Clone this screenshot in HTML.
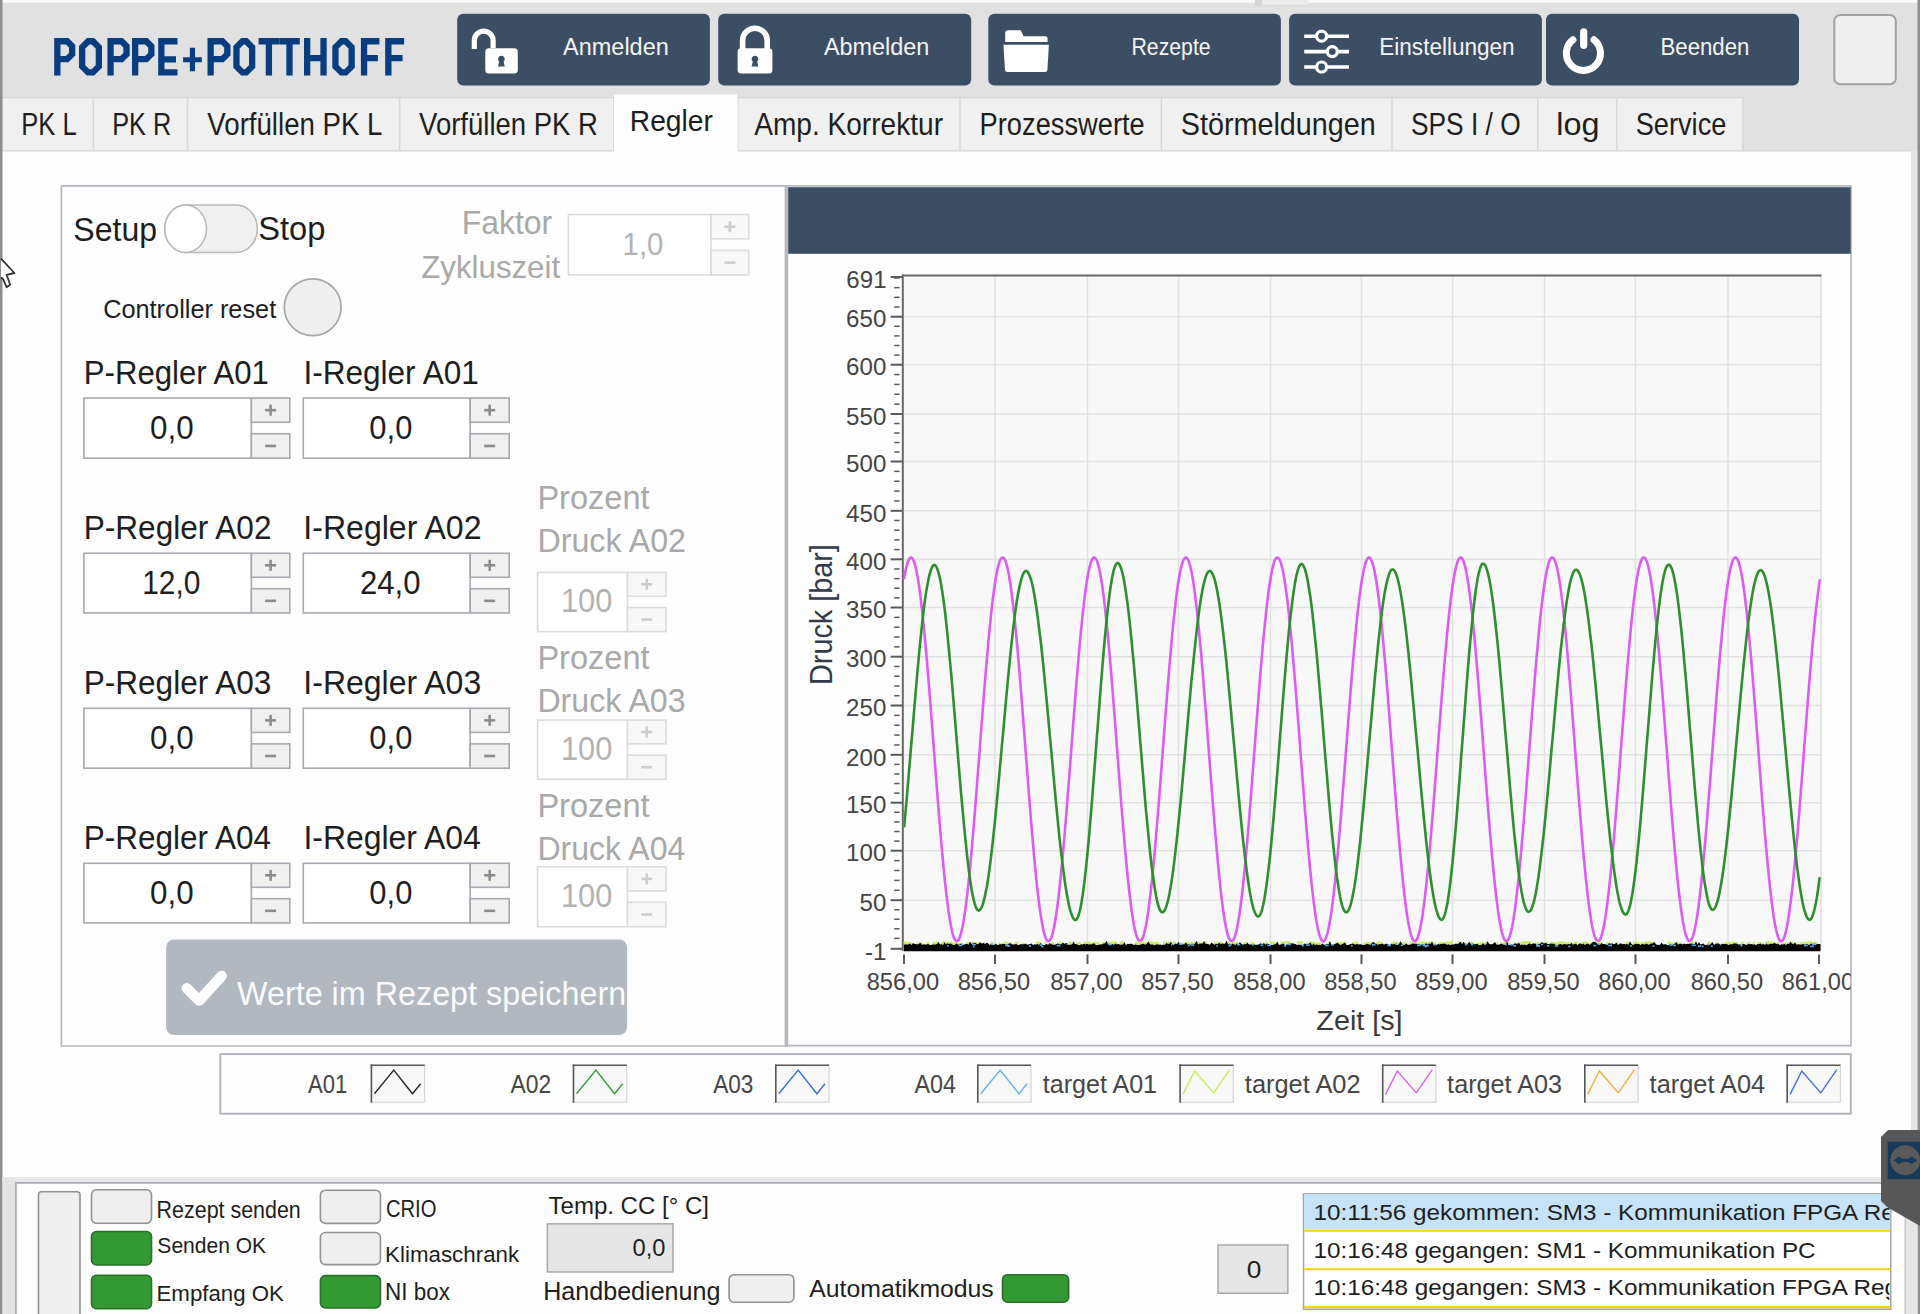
<!DOCTYPE html>
<html><head><meta charset="utf-8"><title>Regler</title>
<style>html,body{margin:0;padding:0;background:#fdfdfd;overflow:hidden;width:1920px;height:1314px}svg{display:block}text{font-family:"Liberation Sans",sans-serif}</style>
</head><body>
<svg width="1920" height="1314" viewBox="0 0 1920 1314">
<rect x="0.00" y="0.00" width="1920.00" height="1314.00" fill="#fdfdfd" />
<rect x="0.00" y="2.50" width="1920.00" height="148.50" fill="#e1e1e1" />
<rect x="0.00" y="0.00" width="1920.00" height="2.50" fill="#fbfbfb" />
<path d="M57.35,75.6 V41.25 H67.15 L72.15,46.25 V54.20 L67.15,59.2 H57.35" fill="none" stroke="#083d80" stroke-width="6.3" stroke-linejoin="miter" stroke-linecap="butt"/>
<path d="M88.15,41.25 H92.85 L98.85,47.25 V66.45 L92.85,72.45 H88.15 L82.15,66.45 V47.25 Z" fill="none" stroke="#083d80" stroke-width="6.3" stroke-linejoin="miter" stroke-linecap="butt"/>
<path d="M110.55,75.6 V41.25 H121.55 L126.55,46.25 V54.20 L121.55,59.2 H110.55" fill="none" stroke="#083d80" stroke-width="6.3" stroke-linejoin="miter" stroke-linecap="butt"/>
<path d="M135.15,75.6 V41.25 H146.35 L151.35,46.25 V54.20 L146.35,59.2 H135.15" fill="none" stroke="#083d80" stroke-width="6.3" stroke-linejoin="miter" stroke-linecap="butt"/>
<path d="M177.50,41.25 H161.35 V72.45 H177.50 M161.35,59.3 H176.00" fill="none" stroke="#083d80" stroke-width="6.3" stroke-linejoin="miter" stroke-linecap="butt"/>
<path d="M192.45,47.8 V71.2 M183.1,59.75 H201.8" stroke="#083d80" stroke-width="5.2" fill="none"/>
<path d="M210.65,75.6 V41.25 H222.35 L227.35,46.25 V54.20 L222.35,59.2 H210.65" fill="none" stroke="#083d80" stroke-width="6.3" stroke-linejoin="miter" stroke-linecap="butt"/>
<path d="M242.45,41.25 H246.15 L252.15,47.25 V66.45 L246.15,72.45 H242.45 L236.45,66.45 V47.25 Z" fill="none" stroke="#083d80" stroke-width="6.3" stroke-linejoin="miter" stroke-linecap="butt"/>
<path d="M258.60,41.25 H279.20 M268.90,41.25 V75.6" fill="none" stroke="#083d80" stroke-width="6.3" stroke-linejoin="miter" stroke-linecap="butt"/>
<path d="M279.20,41.25 H299.80 M289.50,41.25 V75.6" fill="none" stroke="#083d80" stroke-width="6.3" stroke-linejoin="miter" stroke-linecap="butt"/>
<path d="M307.15,38.1 V75.6 M323.55,38.1 V75.6 M307.15,58.1 H323.55" fill="none" stroke="#083d80" stroke-width="6.3" stroke-linejoin="miter" stroke-linecap="butt"/>
<path d="M341.45,41.25 H345.65 L351.65,47.25 V66.45 L345.65,72.45 H341.45 L335.45,66.45 V47.25 Z" fill="none" stroke="#083d80" stroke-width="6.3" stroke-linejoin="miter" stroke-linecap="butt"/>
<path d="M379.40,41.25 H364.05 V75.6 M364.05,58.1 H377.90" fill="none" stroke="#083d80" stroke-width="6.3" stroke-linejoin="miter" stroke-linecap="butt"/>
<path d="M404.10,41.25 H388.35 V75.6 M388.35,58.1 H402.60" fill="none" stroke="#083d80" stroke-width="6.3" stroke-linejoin="miter" stroke-linecap="butt"/>
<rect x="457.20" y="13.80" width="252.70" height="71.70" fill="#3c4e63" rx="6" />
<g><text transform="translate(563.10,55.10) scale(0.9640,1)" font-size="24.35" font-weight="normal" fill="#f4f4f4" >Anmelden</text></g>
<rect x="718.20" y="13.80" width="253.00" height="71.70" fill="#3c4e63" rx="6" />
<g><text transform="translate(823.90,55.10) scale(0.9622,1)" font-size="24.35" font-weight="normal" fill="#f4f4f4" >Abmelden</text></g>
<rect x="988.30" y="13.80" width="292.60" height="71.70" fill="#3c4e63" rx="6" />
<g><text transform="translate(1131.50,55.10) scale(0.8728,1)" font-size="24.35" font-weight="normal" fill="#f4f4f4" >Rezepte</text></g>
<rect x="1289.10" y="13.80" width="252.80" height="71.70" fill="#3c4e63" rx="6" />
<g><text transform="translate(1379.30,55.10) scale(0.9259,1)" font-size="24.35" font-weight="normal" fill="#f4f4f4" >Einstellungen</text></g>
<rect x="1546.00" y="13.80" width="253.00" height="71.70" fill="#3c4e63" rx="6" />
<g><text transform="translate(1660.52,55.10) scale(0.9119,1)" font-size="24.35" font-weight="normal" fill="#f4f4f4" >Beenden</text></g>
<path d="M474.3,49 L474.3,40.5 A9.4,9.4 0 0 1 493.1,40.5 L493.1,48" fill="none" stroke="#ffffff" stroke-width="5.2"/>
<rect x="485.30" y="48.20" width="32.50" height="25.40" fill="#ffffff" rx="3.5" />
<path d="M501.4,55.8 a3.3,3.3 0 0 1 2.2,5.8 l1.2,5 h-6.8 l1.2,-5 a3.3,3.3 0 0 1 2.2,-5.8z" fill="#3c4e63"/>
<path d="M742.6,50 L742.6,40.5 A12.3,12.3 0 0 1 767.2,40.5 L767.2,50" fill="none" stroke="#ffffff" stroke-width="5.6"/>
<rect x="737.60" y="48.20" width="34.80" height="25.40" fill="#ffffff" rx="3.5" />
<path d="M755,55.8 a3.3,3.3 0 0 1 2.2,5.8 l1.2,5 h-6.8 l1.2,-5 a3.3,3.3 0 0 1 2.2,-5.8z" fill="#3c4e63"/>
<path d="M1005.2,33 Q1005.2,30.3 1008,30.3 L1020.8,30.3 L1023.6,36.2 L1045,36.2 Q1047.6,36.2 1047.6,39 L1047.6,42 L1005.2,42 Z" fill="#ffffff"/>
<path d="M1003.4,44.7 L1048.9,44.7 L1047.4,70 Q1047.2,72.1 1045,72.1 L1007.4,72.1 Q1005.2,72.1 1005,70 Z" fill="#ffffff"/>
<line x1="1304.20" y1="36.20" x2="1349.00" y2="36.20" stroke="#ffffff" stroke-width="3.6" />
<circle cx="1321.6" cy="36.2" r="5.0" fill="#3c4e63" stroke="#ffffff" stroke-width="3.2"/>
<line x1="1304.20" y1="51.60" x2="1349.00" y2="51.60" stroke="#ffffff" stroke-width="3.6" />
<circle cx="1332.3" cy="51.6" r="5.0" fill="#3c4e63" stroke="#ffffff" stroke-width="3.2"/>
<line x1="1304.20" y1="67.00" x2="1349.00" y2="67.00" stroke="#ffffff" stroke-width="3.6" />
<circle cx="1321.6" cy="67.0" r="5.0" fill="#3c4e63" stroke="#ffffff" stroke-width="3.2"/>
<path d="M1572.9,39.8 A17.1,17.1 0 1 0 1593.9,39.8" fill="none" stroke="#ffffff" stroke-width="7" stroke-linecap="round"/>
<line x1="1583.70" y1="31.80" x2="1583.70" y2="45.30" stroke="#ffffff" stroke-width="7.2" stroke-linecap="round"/>
<rect x="1834.30" y="15.00" width="61.50" height="69.20" fill="#efefef" stroke="#a2a2a2" stroke-width="2" rx="6" />
<rect x="1255.00" y="0.00" width="53.00" height="6.00" fill="#d7d7d7" />
<rect x="1262.00" y="0.00" width="46.00" height="5.00" fill="#ececec" />
<rect x="2.50" y="98.00" width="90.80" height="52.50" fill="#f0f0f0" />
<rect x="93.30" y="98.00" width="94.20" height="52.50" fill="#f0f0f0" />
<rect x="187.50" y="98.00" width="212.20" height="52.50" fill="#f0f0f0" />
<rect x="399.70" y="98.00" width="213.80" height="52.50" fill="#f0f0f0" />
<rect x="738.00" y="98.00" width="222.00" height="52.50" fill="#f0f0f0" />
<rect x="960.00" y="98.00" width="201.40" height="52.50" fill="#f0f0f0" />
<rect x="1161.40" y="98.00" width="230.60" height="52.50" fill="#f0f0f0" />
<rect x="1392.00" y="98.00" width="145.80" height="52.50" fill="#f0f0f0" />
<rect x="1537.80" y="98.00" width="78.90" height="52.50" fill="#f0f0f0" />
<rect x="1616.70" y="98.00" width="126.10" height="52.50" fill="#f0f0f0" />
<g><text transform="translate(21.26,134.70) scale(0.8237,1)" font-size="31.01" font-weight="normal" fill="#1e1e1e" >PK L</text></g>
<line x1="93.30" y1="98.00" x2="93.30" y2="150.50" stroke="#d9d9d9" stroke-width="1.5" />
<g><text transform="translate(112.18,134.70) scale(0.8159,1)" font-size="31.01" font-weight="normal" fill="#1e1e1e" >PK R</text></g>
<line x1="187.50" y1="98.00" x2="187.50" y2="150.50" stroke="#d9d9d9" stroke-width="1.5" />
<g><text transform="translate(207.36,134.70) scale(0.8915,1)" font-size="31.01" font-weight="normal" fill="#1e1e1e" >Vorfüllen PK L</text></g>
<line x1="399.70" y1="98.00" x2="399.70" y2="150.50" stroke="#d9d9d9" stroke-width="1.5" />
<g><text transform="translate(419.06,134.70) scale(0.8873,1)" font-size="31.01" font-weight="normal" fill="#1e1e1e" >Vorfüllen PK R</text></g>
<g><text transform="translate(754.20,134.70) scale(0.9055,1)" font-size="31.01" font-weight="normal" fill="#1e1e1e" >Amp. Korrektur</text></g>
<line x1="960.00" y1="98.00" x2="960.00" y2="150.50" stroke="#d9d9d9" stroke-width="1.5" />
<g><text transform="translate(979.62,134.70) scale(0.8792,1)" font-size="31.01" font-weight="normal" fill="#1e1e1e" >Prozesswerte</text></g>
<line x1="1161.40" y1="98.00" x2="1161.40" y2="150.50" stroke="#d9d9d9" stroke-width="1.5" />
<g><text transform="translate(1180.70,134.70) scale(0.9281,1)" font-size="31.01" font-weight="normal" fill="#1e1e1e" >Störmeldungen</text></g>
<line x1="1392.00" y1="98.00" x2="1392.00" y2="150.50" stroke="#d9d9d9" stroke-width="1.5" />
<g><text transform="translate(1410.92,134.70) scale(0.8490,1)" font-size="31.01" font-weight="normal" fill="#1e1e1e" >SPS I / O</text></g>
<line x1="1537.80" y1="98.00" x2="1537.80" y2="150.50" stroke="#d9d9d9" stroke-width="1.5" />
<g><text transform="translate(1556.30,134.70) scale(1.0435,1)" font-size="31.01" font-weight="normal" fill="#1e1e1e" >log</text></g>
<line x1="1616.70" y1="98.00" x2="1616.70" y2="150.50" stroke="#d9d9d9" stroke-width="1.5" />
<g><text transform="translate(1635.68,134.70) scale(0.8774,1)" font-size="31.01" font-weight="normal" fill="#1e1e1e" >Service</text></g>
<line x1="1742.80" y1="98.00" x2="1742.80" y2="150.50" stroke="#d9d9d9" stroke-width="1.5" />
<line x1="2.50" y1="97.80" x2="1742.80" y2="97.80" stroke="#d6d6d6" stroke-width="1" />
<rect x="2.50" y="150.50" width="1908.50" height="1026.50" fill="#fdfdfd" />
<line x1="2.50" y1="150.80" x2="613.50" y2="150.80" stroke="#d4d4d4" stroke-width="1.2" />
<line x1="738.00" y1="150.80" x2="1911.00" y2="150.80" stroke="#d4d4d4" stroke-width="1.2" />
<rect x="613.50" y="94.50" width="124.50" height="57.00" fill="#fdfdfd" />
<line x1="613.50" y1="94.50" x2="613.50" y2="151.00" stroke="#dadada" stroke-width="1" />
<line x1="738.00" y1="94.50" x2="738.00" y2="151.00" stroke="#dadada" stroke-width="1" />
<g><text transform="translate(629.74,130.60) scale(0.9461,1)" font-size="29.86" font-weight="normal" fill="#1e1e1e" >Regler</text></g>
<rect x="1911.00" y="150.50" width="6.50" height="1163.50" fill="#e6e6e6" />
<rect x="0.00" y="0.00" width="2.50" height="1314.00" fill="#8e8e8e" />
<rect x="1917.50" y="0.00" width="2.50" height="1314.00" fill="#8e8e8e" />
<line x1="61.40" y1="185.90" x2="1851.50" y2="185.90" stroke="#b3b6bc" stroke-width="1.6" />
<line x1="61.40" y1="185.90" x2="61.40" y2="1046.60" stroke="#b3b6bc" stroke-width="1.6" />
<line x1="61.40" y1="1046.00" x2="786.00" y2="1046.00" stroke="#b3b6bc" stroke-width="1.6" />
<rect x="784.60" y="185.50" width="3.60" height="861.10" fill="#b6b9bf" />
<g><text transform="translate(73.26,240.60) scale(0.9582,1)" font-size="33.48" font-weight="normal" fill="#1e1e1e" >Setup</text></g>
<g><text transform="translate(258.13,240.20) scale(0.9893,1)" font-size="33.04" font-weight="normal" fill="#1e1e1e" >Stop</text></g>
<path d="M185.65,205.05 H236.45 A20.85,23.75 0 0 1 236.45,252.55 H185.65 A20.85,23.75 0 0 1 185.65,205.05 Z" fill="#f0f0f0" stroke="#b8b8b8" stroke-width="1.5"/>
<ellipse cx="185.65" cy="228.8" rx="20.85" ry="23.75" fill="#ffffff" stroke="#b8b8b8" stroke-width="1.5"/>
<g><text transform="translate(103.13,317.70) scale(1.0106,1)" font-size="25.07" font-weight="normal" fill="#1e1e1e" >Controller reset</text></g>
<circle cx="312.7" cy="307.3" r="28.4" fill="#efefef" stroke="#a9a9a9" stroke-width="1.8"/>
<g><text transform="translate(461.85,234.40) scale(0.9777,1)" font-size="32.61" font-weight="normal" fill="#a9a9a9" >Faktor</text></g>
<g><text transform="translate(421.26,277.50) scale(1.0028,1)" font-size="31.16" font-weight="normal" fill="#a9a9a9" >Zykluszeit</text></g>
<rect x="568.40" y="214.60" width="142.60" height="60.30" fill="#ffffff" stroke="#dcdcdc" stroke-width="1.6" />
<rect x="711.00" y="214.60" width="37.80" height="24.27" fill="#f8f8f8" stroke="#dcdcdc" stroke-width="1.6" />
<rect x="711.00" y="250.38" width="37.80" height="24.52" fill="#f8f8f8" stroke="#dcdcdc" stroke-width="1.6" />
<line x1="724.40" y1="226.74" x2="735.40" y2="226.74" stroke="#cdcdcd" stroke-width="2.6" />
<line x1="729.90" y1="221.24" x2="729.90" y2="232.24" stroke="#cdcdcd" stroke-width="2.6" />
<line x1="724.40" y1="262.64" x2="735.40" y2="262.64" stroke="#cdcdcd" stroke-width="2.6" />
<g><text transform="translate(622.60,255.40) scale(0.9364,1)" font-size="31.29" font-weight="normal" fill="#b2b2b2" >1,0</text></g>
<g><text transform="translate(83.76,383.75) scale(0.9550,1)" font-size="32.61" font-weight="normal" fill="#1e1e1e" >P-Regler A01</text></g>
<g><text transform="translate(303.41,383.75) scale(0.9680,1)" font-size="32.61" font-weight="normal" fill="#1e1e1e" >I-Regler A01</text></g>
<rect x="83.90" y="398.05" width="167.50" height="60.15" fill="#ffffff" stroke="#a6a9af" stroke-width="1.6" />
<rect x="251.40" y="398.05" width="38.40" height="24.21" fill="#f0f0f0" stroke="#a6a9af" stroke-width="1.6" />
<rect x="251.40" y="433.74" width="38.40" height="24.46" fill="#f0f0f0" stroke="#a6a9af" stroke-width="1.6" />
<line x1="265.10" y1="410.16" x2="276.10" y2="410.16" stroke="#8c8c8c" stroke-width="2.6" />
<line x1="270.60" y1="404.66" x2="270.60" y2="415.66" stroke="#8c8c8c" stroke-width="2.6" />
<line x1="265.10" y1="445.97" x2="276.10" y2="445.97" stroke="#8c8c8c" stroke-width="2.6" />
<rect x="303.30" y="398.05" width="166.90" height="60.15" fill="#ffffff" stroke="#a6a9af" stroke-width="1.6" />
<rect x="470.20" y="398.05" width="39.00" height="24.21" fill="#f0f0f0" stroke="#a6a9af" stroke-width="1.6" />
<rect x="470.20" y="433.74" width="39.00" height="24.46" fill="#f0f0f0" stroke="#a6a9af" stroke-width="1.6" />
<line x1="484.20" y1="410.16" x2="495.20" y2="410.16" stroke="#8c8c8c" stroke-width="2.6" />
<line x1="489.70" y1="404.66" x2="489.70" y2="415.66" stroke="#8c8c8c" stroke-width="2.6" />
<line x1="484.20" y1="445.97" x2="495.20" y2="445.97" stroke="#8c8c8c" stroke-width="2.6" />
<g><text transform="translate(150.00,438.75) scale(0.9485,1)" font-size="33.07" font-weight="normal" fill="#1e1e1e" >0,0</text></g>
<g><text transform="translate(369.36,438.75) scale(0.9347,1)" font-size="33.07" font-weight="normal" fill="#1e1e1e" >0,0</text></g>
<g><text transform="translate(83.72,538.75) scale(0.9690,1)" font-size="32.61" font-weight="normal" fill="#1e1e1e" >P-Regler A02</text></g>
<g><text transform="translate(303.36,538.75) scale(0.9831,1)" font-size="32.61" font-weight="normal" fill="#1e1e1e" >I-Regler A02</text></g>
<rect x="83.90" y="553.30" width="167.50" height="59.65" fill="#ffffff" stroke="#a6a9af" stroke-width="1.6" />
<rect x="251.40" y="553.30" width="38.40" height="24.00" fill="#f0f0f0" stroke="#a6a9af" stroke-width="1.6" />
<rect x="251.40" y="588.70" width="38.40" height="24.25" fill="#f0f0f0" stroke="#a6a9af" stroke-width="1.6" />
<line x1="265.10" y1="565.30" x2="276.10" y2="565.30" stroke="#8c8c8c" stroke-width="2.6" />
<line x1="270.60" y1="559.80" x2="270.60" y2="570.80" stroke="#8c8c8c" stroke-width="2.6" />
<line x1="265.10" y1="600.83" x2="276.10" y2="600.83" stroke="#8c8c8c" stroke-width="2.6" />
<rect x="303.30" y="553.30" width="166.90" height="59.65" fill="#ffffff" stroke="#a6a9af" stroke-width="1.6" />
<rect x="470.20" y="553.30" width="39.00" height="24.00" fill="#f0f0f0" stroke="#a6a9af" stroke-width="1.6" />
<rect x="470.20" y="588.70" width="39.00" height="24.25" fill="#f0f0f0" stroke="#a6a9af" stroke-width="1.6" />
<line x1="484.20" y1="565.30" x2="495.20" y2="565.30" stroke="#8c8c8c" stroke-width="2.6" />
<line x1="489.70" y1="559.80" x2="489.70" y2="570.80" stroke="#8c8c8c" stroke-width="2.6" />
<line x1="484.20" y1="600.83" x2="495.20" y2="600.83" stroke="#8c8c8c" stroke-width="2.6" />
<g><text transform="translate(142.15,594.00) scale(0.9063,1)" font-size="33.07" font-weight="normal" fill="#1e1e1e" >12,0</text></g>
<g><text transform="translate(359.95,594.00) scale(0.9396,1)" font-size="33.07" font-weight="normal" fill="#1e1e1e" >24,0</text></g>
<g><text transform="translate(83.73,693.75) scale(0.9674,1)" font-size="32.61" font-weight="normal" fill="#1e1e1e" >P-Regler A03</text></g>
<g><text transform="translate(303.37,693.75) scale(0.9813,1)" font-size="32.61" font-weight="normal" fill="#1e1e1e" >I-Regler A03</text></g>
<rect x="83.90" y="708.30" width="167.50" height="59.90" fill="#ffffff" stroke="#a6a9af" stroke-width="1.6" />
<rect x="251.40" y="708.30" width="38.40" height="24.11" fill="#f0f0f0" stroke="#a6a9af" stroke-width="1.6" />
<rect x="251.40" y="743.85" width="38.40" height="24.35" fill="#f0f0f0" stroke="#a6a9af" stroke-width="1.6" />
<line x1="265.10" y1="720.35" x2="276.10" y2="720.35" stroke="#8c8c8c" stroke-width="2.6" />
<line x1="270.60" y1="714.85" x2="270.60" y2="725.85" stroke="#8c8c8c" stroke-width="2.6" />
<line x1="265.10" y1="756.02" x2="276.10" y2="756.02" stroke="#8c8c8c" stroke-width="2.6" />
<rect x="303.30" y="708.30" width="166.90" height="59.90" fill="#ffffff" stroke="#a6a9af" stroke-width="1.6" />
<rect x="470.20" y="708.30" width="39.00" height="24.11" fill="#f0f0f0" stroke="#a6a9af" stroke-width="1.6" />
<rect x="470.20" y="743.85" width="39.00" height="24.35" fill="#f0f0f0" stroke="#a6a9af" stroke-width="1.6" />
<line x1="484.20" y1="720.35" x2="495.20" y2="720.35" stroke="#8c8c8c" stroke-width="2.6" />
<line x1="489.70" y1="714.85" x2="489.70" y2="725.85" stroke="#8c8c8c" stroke-width="2.6" />
<line x1="484.20" y1="756.02" x2="495.20" y2="756.02" stroke="#8c8c8c" stroke-width="2.6" />
<g><text transform="translate(150.00,749.00) scale(0.9485,1)" font-size="33.07" font-weight="normal" fill="#1e1e1e" >0,0</text></g>
<g><text transform="translate(369.36,749.00) scale(0.9347,1)" font-size="33.07" font-weight="normal" fill="#1e1e1e" >0,0</text></g>
<g><text transform="translate(83.73,848.75) scale(0.9657,1)" font-size="32.61" font-weight="normal" fill="#1e1e1e" >P-Regler A04</text></g>
<g><text transform="translate(303.38,848.75) scale(0.9795,1)" font-size="32.61" font-weight="normal" fill="#1e1e1e" >I-Regler A04</text></g>
<rect x="83.90" y="863.30" width="167.50" height="59.65" fill="#ffffff" stroke="#a6a9af" stroke-width="1.6" />
<rect x="251.40" y="863.30" width="38.40" height="24.00" fill="#f0f0f0" stroke="#a6a9af" stroke-width="1.6" />
<rect x="251.40" y="898.70" width="38.40" height="24.25" fill="#f0f0f0" stroke="#a6a9af" stroke-width="1.6" />
<line x1="265.10" y1="875.30" x2="276.10" y2="875.30" stroke="#8c8c8c" stroke-width="2.6" />
<line x1="270.60" y1="869.80" x2="270.60" y2="880.80" stroke="#8c8c8c" stroke-width="2.6" />
<line x1="265.10" y1="910.83" x2="276.10" y2="910.83" stroke="#8c8c8c" stroke-width="2.6" />
<rect x="303.30" y="863.30" width="166.90" height="59.65" fill="#ffffff" stroke="#a6a9af" stroke-width="1.6" />
<rect x="470.20" y="863.30" width="39.00" height="24.00" fill="#f0f0f0" stroke="#a6a9af" stroke-width="1.6" />
<rect x="470.20" y="898.70" width="39.00" height="24.25" fill="#f0f0f0" stroke="#a6a9af" stroke-width="1.6" />
<line x1="484.20" y1="875.30" x2="495.20" y2="875.30" stroke="#8c8c8c" stroke-width="2.6" />
<line x1="489.70" y1="869.80" x2="489.70" y2="880.80" stroke="#8c8c8c" stroke-width="2.6" />
<line x1="484.20" y1="910.83" x2="495.20" y2="910.83" stroke="#8c8c8c" stroke-width="2.6" />
<g><text transform="translate(150.00,904.00) scale(0.9485,1)" font-size="33.07" font-weight="normal" fill="#1e1e1e" >0,0</text></g>
<g><text transform="translate(369.36,904.00) scale(0.9347,1)" font-size="33.07" font-weight="normal" fill="#1e1e1e" >0,0</text></g>
<g><text transform="translate(537.40,508.50) scale(1.0074,1)" font-size="32.32" font-weight="normal" fill="#a9a9a9" >Prozent</text></g>
<g><text transform="translate(537.42,551.90) scale(0.9663,1)" font-size="33.33" font-weight="normal" fill="#a9a9a9" >Druck A02</text></g>
<rect x="537.60" y="572.40" width="89.90" height="59.20" fill="#ffffff" stroke="#dcdcdc" stroke-width="1.6" />
<rect x="627.50" y="572.40" width="38.50" height="23.81" fill="#f8f8f8" stroke="#dcdcdc" stroke-width="1.6" />
<rect x="627.50" y="607.54" width="38.50" height="24.06" fill="#f8f8f8" stroke="#dcdcdc" stroke-width="1.6" />
<line x1="641.25" y1="584.31" x2="652.25" y2="584.31" stroke="#cdcdcd" stroke-width="2.6" />
<line x1="646.75" y1="578.81" x2="646.75" y2="589.81" stroke="#cdcdcd" stroke-width="2.6" />
<line x1="641.25" y1="619.57" x2="652.25" y2="619.57" stroke="#cdcdcd" stroke-width="2.6" />
<g><text transform="translate(560.99,612.30) scale(0.9541,1)" font-size="32.29" font-weight="normal" fill="#b2b2b2" >100</text></g>
<g><text transform="translate(537.40,668.80) scale(1.0074,1)" font-size="32.32" font-weight="normal" fill="#a9a9a9" >Prozent</text></g>
<g><text transform="translate(537.43,712.10) scale(0.9641,1)" font-size="33.33" font-weight="normal" fill="#a9a9a9" >Druck A03</text></g>
<rect x="537.60" y="720.10" width="89.90" height="59.10" fill="#ffffff" stroke="#dcdcdc" stroke-width="1.6" />
<rect x="627.50" y="720.10" width="38.50" height="23.77" fill="#f8f8f8" stroke="#dcdcdc" stroke-width="1.6" />
<rect x="627.50" y="755.18" width="38.50" height="24.02" fill="#f8f8f8" stroke="#dcdcdc" stroke-width="1.6" />
<line x1="641.25" y1="731.99" x2="652.25" y2="731.99" stroke="#cdcdcd" stroke-width="2.6" />
<line x1="646.75" y1="726.49" x2="646.75" y2="737.49" stroke="#cdcdcd" stroke-width="2.6" />
<line x1="641.25" y1="767.19" x2="652.25" y2="767.19" stroke="#cdcdcd" stroke-width="2.6" />
<g><text transform="translate(560.99,760.00) scale(0.9541,1)" font-size="32.29" font-weight="normal" fill="#b2b2b2" >100</text></g>
<g><text transform="translate(537.40,816.60) scale(1.0074,1)" font-size="32.32" font-weight="normal" fill="#a9a9a9" >Prozent</text></g>
<g><text transform="translate(537.43,859.60) scale(0.9620,1)" font-size="33.33" font-weight="normal" fill="#a9a9a9" >Druck A04</text></g>
<rect x="537.60" y="866.80" width="89.90" height="59.90" fill="#ffffff" stroke="#dcdcdc" stroke-width="1.6" />
<rect x="627.50" y="866.80" width="38.50" height="24.11" fill="#f8f8f8" stroke="#dcdcdc" stroke-width="1.6" />
<rect x="627.50" y="902.35" width="38.50" height="24.35" fill="#f8f8f8" stroke="#dcdcdc" stroke-width="1.6" />
<line x1="641.25" y1="878.85" x2="652.25" y2="878.85" stroke="#cdcdcd" stroke-width="2.6" />
<line x1="646.75" y1="873.35" x2="646.75" y2="884.35" stroke="#cdcdcd" stroke-width="2.6" />
<line x1="641.25" y1="914.52" x2="652.25" y2="914.52" stroke="#cdcdcd" stroke-width="2.6" />
<g><text transform="translate(560.99,906.70) scale(0.9541,1)" font-size="32.29" font-weight="normal" fill="#b2b2b2" >100</text></g>
<rect x="166.10" y="939.50" width="461.00" height="95.60" fill="#b1b8c0" rx="8" />
<path d="M186.8,988.2 L199.2,1000.6 L221.6,976" fill="none" stroke="#ffffff" stroke-width="10.5" stroke-linecap="round" stroke-linejoin="round"/>
<g><text transform="translate(237.04,1005.40) scale(0.9737,1)" font-size="33.19" font-weight="normal" fill="#fafafa" >Werte im Rezept speichern</text></g>
<line x1="1851.00" y1="185.90" x2="1851.00" y2="1046.20" stroke="#b3b6bc" stroke-width="1.6" />
<line x1="786.00" y1="1045.60" x2="1851.50" y2="1045.60" stroke="#b3b6bc" stroke-width="1.6" />
<rect x="788.20" y="187.20" width="1062.50" height="66.60" fill="#3c4e63" />
<rect x="903.50" y="275.40" width="917.50" height="674.60" fill="#f8f8f8" />
<line x1="995.00" y1="275.40" x2="995.00" y2="950.00" stroke="#e2e2e2" stroke-width="1.5" />
<line x1="1087.50" y1="275.40" x2="1087.50" y2="950.00" stroke="#e2e2e2" stroke-width="1.5" />
<line x1="1178.50" y1="275.40" x2="1178.50" y2="950.00" stroke="#e2e2e2" stroke-width="1.5" />
<line x1="1270.50" y1="275.40" x2="1270.50" y2="950.00" stroke="#e2e2e2" stroke-width="1.5" />
<line x1="1361.50" y1="275.40" x2="1361.50" y2="950.00" stroke="#e2e2e2" stroke-width="1.5" />
<line x1="1452.50" y1="275.40" x2="1452.50" y2="950.00" stroke="#e2e2e2" stroke-width="1.5" />
<line x1="1544.50" y1="275.40" x2="1544.50" y2="950.00" stroke="#e2e2e2" stroke-width="1.5" />
<line x1="1635.50" y1="275.40" x2="1635.50" y2="950.00" stroke="#e2e2e2" stroke-width="1.5" />
<line x1="1728.00" y1="275.40" x2="1728.00" y2="950.00" stroke="#e2e2e2" stroke-width="1.5" />
<line x1="903.50" y1="900.20" x2="1821.00" y2="900.20" stroke="#e2e2e2" stroke-width="1.5" />
<line x1="903.50" y1="850.70" x2="1821.00" y2="850.70" stroke="#e2e2e2" stroke-width="1.5" />
<line x1="903.50" y1="802.70" x2="1821.00" y2="802.70" stroke="#e2e2e2" stroke-width="1.5" />
<line x1="903.50" y1="754.80" x2="1821.00" y2="754.80" stroke="#e2e2e2" stroke-width="1.5" />
<line x1="903.50" y1="705.50" x2="1821.00" y2="705.50" stroke="#e2e2e2" stroke-width="1.5" />
<line x1="903.50" y1="656.70" x2="1821.00" y2="656.70" stroke="#e2e2e2" stroke-width="1.5" />
<line x1="903.50" y1="607.50" x2="1821.00" y2="607.50" stroke="#e2e2e2" stroke-width="1.5" />
<line x1="903.50" y1="559.30" x2="1821.00" y2="559.30" stroke="#e2e2e2" stroke-width="1.5" />
<line x1="903.50" y1="510.80" x2="1821.00" y2="510.80" stroke="#e2e2e2" stroke-width="1.5" />
<line x1="903.50" y1="461.50" x2="1821.00" y2="461.50" stroke="#e2e2e2" stroke-width="1.5" />
<line x1="903.50" y1="414.00" x2="1821.00" y2="414.00" stroke="#e2e2e2" stroke-width="1.5" />
<line x1="903.50" y1="364.70" x2="1821.00" y2="364.70" stroke="#e2e2e2" stroke-width="1.5" />
<line x1="903.50" y1="316.70" x2="1821.00" y2="316.70" stroke="#e2e2e2" stroke-width="1.5" />
<line x1="1821.00" y1="275.40" x2="1821.00" y2="950.00" stroke="#dcdcdc" stroke-width="1.5" />
<line x1="902.00" y1="275.40" x2="1821.50" y2="275.40" stroke="#686868" stroke-width="2" />
<line x1="902.80" y1="274.50" x2="902.80" y2="951.00" stroke="#686868" stroke-width="2" />
<line x1="894.20" y1="938.32" x2="899.60" y2="938.32" stroke="#5a5a5a" stroke-width="1.5" />
<line x1="894.20" y1="928.79" x2="899.60" y2="928.79" stroke="#5a5a5a" stroke-width="1.5" />
<line x1="894.20" y1="919.26" x2="899.60" y2="919.26" stroke="#5a5a5a" stroke-width="1.5" />
<line x1="894.20" y1="909.73" x2="899.60" y2="909.73" stroke="#5a5a5a" stroke-width="1.5" />
<line x1="894.20" y1="890.30" x2="899.60" y2="890.30" stroke="#5a5a5a" stroke-width="1.5" />
<line x1="894.20" y1="880.40" x2="899.60" y2="880.40" stroke="#5a5a5a" stroke-width="1.5" />
<line x1="894.20" y1="870.50" x2="899.60" y2="870.50" stroke="#5a5a5a" stroke-width="1.5" />
<line x1="894.20" y1="860.60" x2="899.60" y2="860.60" stroke="#5a5a5a" stroke-width="1.5" />
<line x1="894.20" y1="841.10" x2="899.60" y2="841.10" stroke="#5a5a5a" stroke-width="1.5" />
<line x1="894.20" y1="831.50" x2="899.60" y2="831.50" stroke="#5a5a5a" stroke-width="1.5" />
<line x1="894.20" y1="821.90" x2="899.60" y2="821.90" stroke="#5a5a5a" stroke-width="1.5" />
<line x1="894.20" y1="812.30" x2="899.60" y2="812.30" stroke="#5a5a5a" stroke-width="1.5" />
<line x1="894.20" y1="793.12" x2="899.60" y2="793.12" stroke="#5a5a5a" stroke-width="1.5" />
<line x1="894.20" y1="783.54" x2="899.60" y2="783.54" stroke="#5a5a5a" stroke-width="1.5" />
<line x1="894.20" y1="773.96" x2="899.60" y2="773.96" stroke="#5a5a5a" stroke-width="1.5" />
<line x1="894.20" y1="764.38" x2="899.60" y2="764.38" stroke="#5a5a5a" stroke-width="1.5" />
<line x1="894.20" y1="744.94" x2="899.60" y2="744.94" stroke="#5a5a5a" stroke-width="1.5" />
<line x1="894.20" y1="735.08" x2="899.60" y2="735.08" stroke="#5a5a5a" stroke-width="1.5" />
<line x1="894.20" y1="725.22" x2="899.60" y2="725.22" stroke="#5a5a5a" stroke-width="1.5" />
<line x1="894.20" y1="715.36" x2="899.60" y2="715.36" stroke="#5a5a5a" stroke-width="1.5" />
<line x1="894.20" y1="695.74" x2="899.60" y2="695.74" stroke="#5a5a5a" stroke-width="1.5" />
<line x1="894.20" y1="685.98" x2="899.60" y2="685.98" stroke="#5a5a5a" stroke-width="1.5" />
<line x1="894.20" y1="676.22" x2="899.60" y2="676.22" stroke="#5a5a5a" stroke-width="1.5" />
<line x1="894.20" y1="666.46" x2="899.60" y2="666.46" stroke="#5a5a5a" stroke-width="1.5" />
<line x1="894.20" y1="646.86" x2="899.60" y2="646.86" stroke="#5a5a5a" stroke-width="1.5" />
<line x1="894.20" y1="637.02" x2="899.60" y2="637.02" stroke="#5a5a5a" stroke-width="1.5" />
<line x1="894.20" y1="627.18" x2="899.60" y2="627.18" stroke="#5a5a5a" stroke-width="1.5" />
<line x1="894.20" y1="617.34" x2="899.60" y2="617.34" stroke="#5a5a5a" stroke-width="1.5" />
<line x1="894.20" y1="597.86" x2="899.60" y2="597.86" stroke="#5a5a5a" stroke-width="1.5" />
<line x1="894.20" y1="588.22" x2="899.60" y2="588.22" stroke="#5a5a5a" stroke-width="1.5" />
<line x1="894.20" y1="578.58" x2="899.60" y2="578.58" stroke="#5a5a5a" stroke-width="1.5" />
<line x1="894.20" y1="568.94" x2="899.60" y2="568.94" stroke="#5a5a5a" stroke-width="1.5" />
<line x1="894.20" y1="549.60" x2="899.60" y2="549.60" stroke="#5a5a5a" stroke-width="1.5" />
<line x1="894.20" y1="539.90" x2="899.60" y2="539.90" stroke="#5a5a5a" stroke-width="1.5" />
<line x1="894.20" y1="530.20" x2="899.60" y2="530.20" stroke="#5a5a5a" stroke-width="1.5" />
<line x1="894.20" y1="520.50" x2="899.60" y2="520.50" stroke="#5a5a5a" stroke-width="1.5" />
<line x1="894.20" y1="500.94" x2="899.60" y2="500.94" stroke="#5a5a5a" stroke-width="1.5" />
<line x1="894.20" y1="491.08" x2="899.60" y2="491.08" stroke="#5a5a5a" stroke-width="1.5" />
<line x1="894.20" y1="481.22" x2="899.60" y2="481.22" stroke="#5a5a5a" stroke-width="1.5" />
<line x1="894.20" y1="471.36" x2="899.60" y2="471.36" stroke="#5a5a5a" stroke-width="1.5" />
<line x1="894.20" y1="452.00" x2="899.60" y2="452.00" stroke="#5a5a5a" stroke-width="1.5" />
<line x1="894.20" y1="442.50" x2="899.60" y2="442.50" stroke="#5a5a5a" stroke-width="1.5" />
<line x1="894.20" y1="433.00" x2="899.60" y2="433.00" stroke="#5a5a5a" stroke-width="1.5" />
<line x1="894.20" y1="423.50" x2="899.60" y2="423.50" stroke="#5a5a5a" stroke-width="1.5" />
<line x1="894.20" y1="404.14" x2="899.60" y2="404.14" stroke="#5a5a5a" stroke-width="1.5" />
<line x1="894.20" y1="394.28" x2="899.60" y2="394.28" stroke="#5a5a5a" stroke-width="1.5" />
<line x1="894.20" y1="384.42" x2="899.60" y2="384.42" stroke="#5a5a5a" stroke-width="1.5" />
<line x1="894.20" y1="374.56" x2="899.60" y2="374.56" stroke="#5a5a5a" stroke-width="1.5" />
<line x1="894.20" y1="355.10" x2="899.60" y2="355.10" stroke="#5a5a5a" stroke-width="1.5" />
<line x1="894.20" y1="345.50" x2="899.60" y2="345.50" stroke="#5a5a5a" stroke-width="1.5" />
<line x1="894.20" y1="335.90" x2="899.60" y2="335.90" stroke="#5a5a5a" stroke-width="1.5" />
<line x1="894.20" y1="326.30" x2="899.60" y2="326.30" stroke="#5a5a5a" stroke-width="1.5" />
<line x1="894.20" y1="307.02" x2="899.60" y2="307.02" stroke="#5a5a5a" stroke-width="1.5" />
<line x1="894.20" y1="297.33" x2="899.60" y2="297.33" stroke="#5a5a5a" stroke-width="1.5" />
<line x1="894.20" y1="287.65" x2="899.60" y2="287.65" stroke="#5a5a5a" stroke-width="1.5" />
<line x1="894.20" y1="277.97" x2="899.60" y2="277.97" stroke="#5a5a5a" stroke-width="1.5" />
<line x1="890.60" y1="900.20" x2="902.00" y2="900.20" stroke="#5a5a5a" stroke-width="2" />
<line x1="890.60" y1="850.70" x2="902.00" y2="850.70" stroke="#5a5a5a" stroke-width="2" />
<line x1="890.60" y1="802.70" x2="902.00" y2="802.70" stroke="#5a5a5a" stroke-width="2" />
<line x1="890.60" y1="754.80" x2="902.00" y2="754.80" stroke="#5a5a5a" stroke-width="2" />
<line x1="890.60" y1="705.50" x2="902.00" y2="705.50" stroke="#5a5a5a" stroke-width="2" />
<line x1="890.60" y1="656.70" x2="902.00" y2="656.70" stroke="#5a5a5a" stroke-width="2" />
<line x1="890.60" y1="607.50" x2="902.00" y2="607.50" stroke="#5a5a5a" stroke-width="2" />
<line x1="890.60" y1="559.30" x2="902.00" y2="559.30" stroke="#5a5a5a" stroke-width="2" />
<line x1="890.60" y1="510.80" x2="902.00" y2="510.80" stroke="#5a5a5a" stroke-width="2" />
<line x1="890.60" y1="461.50" x2="902.00" y2="461.50" stroke="#5a5a5a" stroke-width="2" />
<line x1="890.60" y1="414.00" x2="902.00" y2="414.00" stroke="#5a5a5a" stroke-width="2" />
<line x1="890.60" y1="364.70" x2="902.00" y2="364.70" stroke="#5a5a5a" stroke-width="2" />
<line x1="890.60" y1="316.70" x2="902.00" y2="316.70" stroke="#5a5a5a" stroke-width="2" />
<line x1="890.60" y1="277.00" x2="902.00" y2="277.00" stroke="#5a5a5a" stroke-width="2" />
<line x1="890.60" y1="948.80" x2="902.00" y2="948.80" stroke="#5a5a5a" stroke-width="2" />
<g><text transform="translate(859.49,910.90) scale(1.0041,1)" font-size="24.00" font-weight="normal" fill="#444444" >50</text></g>
<g><text transform="translate(846.12,861.40) scale(1.0041,1)" font-size="24.00" font-weight="normal" fill="#444444" >100</text></g>
<g><text transform="translate(846.12,813.40) scale(1.0041,1)" font-size="24.00" font-weight="normal" fill="#444444" >150</text></g>
<g><text transform="translate(846.12,765.50) scale(1.0041,1)" font-size="24.00" font-weight="normal" fill="#444444" >200</text></g>
<g><text transform="translate(846.12,716.20) scale(1.0041,1)" font-size="24.00" font-weight="normal" fill="#444444" >250</text></g>
<g><text transform="translate(846.12,667.40) scale(1.0041,1)" font-size="24.00" font-weight="normal" fill="#444444" >300</text></g>
<g><text transform="translate(846.12,618.20) scale(1.0041,1)" font-size="24.00" font-weight="normal" fill="#444444" >350</text></g>
<g><text transform="translate(846.12,570.00) scale(1.0041,1)" font-size="24.00" font-weight="normal" fill="#444444" >400</text></g>
<g><text transform="translate(846.12,521.50) scale(1.0041,1)" font-size="24.00" font-weight="normal" fill="#444444" >450</text></g>
<g><text transform="translate(846.12,472.20) scale(1.0041,1)" font-size="24.00" font-weight="normal" fill="#444444" >500</text></g>
<g><text transform="translate(846.12,424.70) scale(1.0041,1)" font-size="24.00" font-weight="normal" fill="#444444" >550</text></g>
<g><text transform="translate(846.12,375.40) scale(1.0041,1)" font-size="24.00" font-weight="normal" fill="#444444" >600</text></g>
<g><text transform="translate(846.12,327.40) scale(1.0041,1)" font-size="24.00" font-weight="normal" fill="#444444" >650</text></g>
<g><text transform="translate(846.36,287.70) scale(1.0041,1)" font-size="24.00" font-weight="normal" fill="#444444" >691</text></g>
<g><text transform="translate(865.04,959.50) scale(1.0041,1)" font-size="24.00" font-weight="normal" fill="#444444" >-1</text></g>
<clipPath id="cpx"><rect x="780" y="960" width="1070.6" height="50"/></clipPath>
<line x1="904.00" y1="954.40" x2="904.00" y2="964.10" stroke="#5a5a5a" stroke-width="2" />
<g clip-path="url(#cpx)"><text transform="translate(866.69,990.00) scale(1.0037,1)" font-size="23.57" font-weight="normal" fill="#444444" >856,00</text></g>
<line x1="995.00" y1="954.40" x2="995.00" y2="964.10" stroke="#5a5a5a" stroke-width="2" />
<g clip-path="url(#cpx)"><text transform="translate(957.69,990.00) scale(1.0037,1)" font-size="23.57" font-weight="normal" fill="#444444" >856,50</text></g>
<line x1="1087.50" y1="954.40" x2="1087.50" y2="964.10" stroke="#5a5a5a" stroke-width="2" />
<g clip-path="url(#cpx)"><text transform="translate(1050.19,990.00) scale(1.0037,1)" font-size="23.57" font-weight="normal" fill="#444444" >857,00</text></g>
<line x1="1178.50" y1="954.40" x2="1178.50" y2="964.10" stroke="#5a5a5a" stroke-width="2" />
<g clip-path="url(#cpx)"><text transform="translate(1141.19,990.00) scale(1.0037,1)" font-size="23.57" font-weight="normal" fill="#444444" >857,50</text></g>
<line x1="1270.50" y1="954.40" x2="1270.50" y2="964.10" stroke="#5a5a5a" stroke-width="2" />
<g clip-path="url(#cpx)"><text transform="translate(1233.19,990.00) scale(1.0037,1)" font-size="23.57" font-weight="normal" fill="#444444" >858,00</text></g>
<line x1="1361.50" y1="954.40" x2="1361.50" y2="964.10" stroke="#5a5a5a" stroke-width="2" />
<g clip-path="url(#cpx)"><text transform="translate(1324.19,990.00) scale(1.0037,1)" font-size="23.57" font-weight="normal" fill="#444444" >858,50</text></g>
<line x1="1452.50" y1="954.40" x2="1452.50" y2="964.10" stroke="#5a5a5a" stroke-width="2" />
<g clip-path="url(#cpx)"><text transform="translate(1415.19,990.00) scale(1.0037,1)" font-size="23.57" font-weight="normal" fill="#444444" >859,00</text></g>
<line x1="1544.50" y1="954.40" x2="1544.50" y2="964.10" stroke="#5a5a5a" stroke-width="2" />
<g clip-path="url(#cpx)"><text transform="translate(1507.19,990.00) scale(1.0037,1)" font-size="23.57" font-weight="normal" fill="#444444" >859,50</text></g>
<line x1="1635.50" y1="954.40" x2="1635.50" y2="964.10" stroke="#5a5a5a" stroke-width="2" />
<g clip-path="url(#cpx)"><text transform="translate(1598.19,990.00) scale(1.0037,1)" font-size="23.57" font-weight="normal" fill="#444444" >860,00</text></g>
<line x1="1728.00" y1="954.40" x2="1728.00" y2="964.10" stroke="#5a5a5a" stroke-width="2" />
<g clip-path="url(#cpx)"><text transform="translate(1690.69,990.00) scale(1.0037,1)" font-size="23.57" font-weight="normal" fill="#444444" >860,50</text></g>
<line x1="1819.00" y1="954.40" x2="1819.00" y2="964.10" stroke="#5a5a5a" stroke-width="2" />
<g clip-path="url(#cpx)"><text transform="translate(1781.69,990.00) scale(1.0037,1)" font-size="23.57" font-weight="normal" fill="#444444" >861,00</text></g>
<g><text transform="translate(1316.34,1029.70) scale(1.0335,1)" font-size="27.83" font-weight="normal" fill="#3a3a3a" >Zeit [s]</text></g>
<text transform="translate(831.7,685.01) rotate(-90) scale(0.9295,1)" font-size="31.01" fill="#333b4a">Druck [bar]</text>
<clipPath id="cpp"><rect x="903.8" y="276" width="917" height="676"/></clipPath>
<polyline clip-path="url(#cpp)" points="904.0,579.2 905.0,573.5 906.0,568.7 907.0,564.7 908.0,561.5 909.0,559.3 910.0,558.0 911.0,557.5 912.0,558.0 913.0,559.3 914.0,561.5 915.0,564.7 916.0,568.7 917.0,573.5 918.0,579.2 919.0,585.7 920.0,592.9 921.0,600.9 922.0,609.6 923.0,618.9 924.0,628.9 925.0,639.4 926.0,650.4 927.0,661.9 928.0,673.8 929.0,686.1 930.0,698.7 931.0,711.5 932.0,724.5 933.0,737.6 934.0,750.7 935.0,763.9 936.0,776.9 937.0,789.9 938.0,802.7 939.0,815.2 940.0,827.4 941.0,839.2 942.0,850.6 943.0,861.6 944.0,872.0 945.0,881.8 946.0,891.0 947.0,899.6 948.0,907.4 949.0,914.5 950.0,920.8 951.0,926.3 952.0,931.0 953.0,934.8 954.0,937.8 955.0,939.8 956.0,941.0 957.0,941.3 958.0,940.7 959.0,939.1 960.0,936.7 961.0,933.4 962.0,929.2 963.0,924.2 964.0,918.4 965.0,911.7 966.0,904.3 967.0,896.2 968.0,887.4 969.0,877.9 970.0,867.9 971.0,857.2 972.0,846.1 973.0,834.5 974.0,822.5 975.0,810.2 976.0,797.6 977.0,784.7 978.0,771.7 979.0,758.6 980.0,745.5 981.0,732.3 982.0,719.3 983.0,706.3 984.0,693.6 985.0,681.2 986.0,669.0 987.0,657.3 988.0,646.0 989.0,635.1 990.0,624.8 991.0,615.1 992.0,606.0 993.0,597.6 994.0,589.9 995.0,583.0 996.0,576.8 997.0,571.5 998.0,567.0 999.0,563.3 1000.0,560.5 1001.0,558.7 1002.0,557.7 1003.0,557.6 1004.0,558.4 1005.0,560.1 1006.0,562.7 1007.0,566.2 1008.0,570.5 1009.0,575.7 1010.0,581.7 1011.0,588.5 1012.0,596.0 1013.0,604.3 1014.0,613.2 1015.0,622.8 1016.0,633.0 1017.0,643.7 1018.0,655.0 1019.0,666.6 1020.0,678.7 1021.0,691.1 1022.0,703.8 1023.0,716.7 1024.0,729.7 1025.0,742.8 1026.0,756.0 1027.0,769.1 1028.0,782.1 1029.0,795.0 1030.0,807.7 1031.0,820.1 1032.0,832.2 1033.0,843.8 1034.0,855.1 1035.0,865.8 1036.0,876.0 1037.0,885.6 1038.0,894.5 1039.0,902.8 1040.0,910.3 1041.0,917.1 1042.0,923.1 1043.0,928.3 1044.0,932.6 1045.0,936.1 1046.0,938.7 1047.0,940.4 1048.0,941.2 1049.0,941.1 1050.0,940.1 1051.0,938.3 1052.0,935.5 1053.0,931.8 1054.0,927.3 1055.0,922.0 1056.0,915.8 1057.0,908.9 1058.0,901.2 1059.0,892.8 1060.0,883.7 1061.0,874.0 1062.0,863.7 1063.0,852.8 1064.0,841.5 1065.0,829.8 1066.0,817.6 1067.0,805.2 1068.0,792.5 1069.0,779.5 1070.0,766.5 1071.0,753.3 1072.0,740.2 1073.0,727.1 1074.0,714.1 1075.0,701.2 1076.0,688.6 1077.0,676.3 1078.0,664.3 1079.0,652.7 1080.0,641.6 1081.0,630.9 1082.0,620.9 1083.0,611.4 1084.0,602.6 1085.0,594.5 1086.0,587.1 1087.0,580.4 1088.0,574.6 1089.0,569.6 1090.0,565.4 1091.0,562.1 1092.0,559.7 1093.0,558.1 1094.0,557.5 1095.0,557.8 1096.0,559.0 1097.0,561.0 1098.0,564.0 1099.0,567.8 1100.0,572.5 1101.0,578.0 1102.0,584.3 1103.0,591.4 1104.0,599.2 1105.0,607.8 1106.0,617.0 1107.0,626.8 1108.0,637.2 1109.0,648.2 1110.0,659.6 1111.0,671.4 1112.0,683.6 1113.0,696.1 1114.0,708.9 1115.0,721.9 1116.0,734.9 1117.0,748.1 1118.0,761.2 1119.0,774.3 1120.0,787.3 1121.0,800.1 1122.0,812.7 1123.0,825.0 1124.0,836.9 1125.0,848.4 1126.0,859.4 1127.0,869.9 1128.0,879.9 1129.0,889.2 1130.0,897.9 1131.0,905.9 1132.0,913.1 1133.0,919.6 1134.0,925.3 1135.0,930.1 1136.0,934.1 1137.0,937.3 1138.0,939.5 1139.0,940.8 1140.0,941.3 1141.0,940.8 1142.0,939.5 1143.0,937.3 1144.0,934.1 1145.0,930.1 1146.0,925.3 1147.0,919.6 1148.0,913.1 1149.0,905.9 1150.0,897.9 1151.0,889.2 1152.0,879.9 1153.0,869.9 1154.0,859.4 1155.0,848.4 1156.0,836.9 1157.0,825.0 1158.0,812.7 1159.0,800.1 1160.0,787.3 1161.0,774.3 1162.0,761.2 1163.0,748.1 1164.0,734.9 1165.0,721.9 1166.0,708.9 1167.0,696.1 1168.0,683.6 1169.0,671.4 1170.0,659.6 1171.0,648.2 1172.0,637.2 1173.0,626.8 1174.0,617.0 1175.0,607.8 1176.0,599.2 1177.0,591.4 1178.0,584.3 1179.0,578.0 1180.0,572.5 1181.0,567.8 1182.0,564.0 1183.0,561.0 1184.0,559.0 1185.0,557.8 1186.0,557.5 1187.0,558.1 1188.0,559.7 1189.0,562.1 1190.0,565.4 1191.0,569.6 1192.0,574.6 1193.0,580.4 1194.0,587.1 1195.0,594.5 1196.0,602.6 1197.0,611.4 1198.0,620.9 1199.0,630.9 1200.0,641.6 1201.0,652.7 1202.0,664.3 1203.0,676.3 1204.0,688.6 1205.0,701.2 1206.0,714.1 1207.0,727.1 1208.0,740.2 1209.0,753.3 1210.0,766.5 1211.0,779.5 1212.0,792.5 1213.0,805.2 1214.0,817.6 1215.0,829.8 1216.0,841.5 1217.0,852.8 1218.0,863.7 1219.0,874.0 1220.0,883.7 1221.0,892.8 1222.0,901.2 1223.0,908.9 1224.0,915.8 1225.0,922.0 1226.0,927.3 1227.0,931.8 1228.0,935.5 1229.0,938.3 1230.0,940.1 1231.0,941.1 1232.0,941.2 1233.0,940.4 1234.0,938.7 1235.0,936.1 1236.0,932.6 1237.0,928.3 1238.0,923.1 1239.0,917.1 1240.0,910.3 1241.0,902.8 1242.0,894.5 1243.0,885.6 1244.0,876.0 1245.0,865.8 1246.0,855.1 1247.0,843.8 1248.0,832.2 1249.0,820.1 1250.0,807.7 1251.0,795.0 1252.0,782.1 1253.0,769.1 1254.0,756.0 1255.0,742.8 1256.0,729.7 1257.0,716.7 1258.0,703.8 1259.0,691.1 1260.0,678.7 1261.0,666.6 1262.0,655.0 1263.0,643.7 1264.0,633.0 1265.0,622.8 1266.0,613.2 1267.0,604.3 1268.0,596.0 1269.0,588.5 1270.0,581.7 1271.0,575.7 1272.0,570.5 1273.0,566.2 1274.0,562.7 1275.0,560.1 1276.0,558.4 1277.0,557.6 1278.0,557.7 1279.0,558.7 1280.0,560.5 1281.0,563.3 1282.0,567.0 1283.0,571.5 1284.0,576.8 1285.0,583.0 1286.0,589.9 1287.0,597.6 1288.0,606.0 1289.0,615.1 1290.0,624.8 1291.0,635.1 1292.0,646.0 1293.0,657.3 1294.0,669.0 1295.0,681.2 1296.0,693.6 1297.0,706.3 1298.0,719.3 1299.0,732.3 1300.0,745.5 1301.0,758.6 1302.0,771.7 1303.0,784.7 1304.0,797.6 1305.0,810.2 1306.0,822.5 1307.0,834.5 1308.0,846.1 1309.0,857.2 1310.0,867.9 1311.0,877.9 1312.0,887.4 1313.0,896.2 1314.0,904.3 1315.0,911.7 1316.0,918.4 1317.0,924.2 1318.0,929.2 1319.0,933.4 1320.0,936.7 1321.0,939.1 1322.0,940.7 1323.0,941.3 1324.0,941.0 1325.0,939.8 1326.0,937.8 1327.0,934.8 1328.0,931.0 1329.0,926.3 1330.0,920.8 1331.0,914.5 1332.0,907.4 1333.0,899.6 1334.0,891.0 1335.0,881.8 1336.0,872.0 1337.0,861.6 1338.0,850.6 1339.0,839.2 1340.0,827.4 1341.0,815.2 1342.0,802.7 1343.0,789.9 1344.0,776.9 1345.0,763.9 1346.0,750.7 1347.0,737.6 1348.0,724.5 1349.0,711.5 1350.0,698.7 1351.0,686.1 1352.0,673.8 1353.0,661.9 1354.0,650.4 1355.0,639.4 1356.0,628.9 1357.0,618.9 1358.0,609.6 1359.0,600.9 1360.0,592.9 1361.0,585.7 1362.0,579.2 1363.0,573.5 1364.0,568.7 1365.0,564.7 1366.0,561.5 1367.0,559.3 1368.0,558.0 1369.0,557.5 1370.0,558.0 1371.0,559.3 1372.0,561.5 1373.0,564.7 1374.0,568.7 1375.0,573.5 1376.0,579.2 1377.0,585.7 1378.0,592.9 1379.0,600.9 1380.0,609.6 1381.0,618.9 1382.0,628.9 1383.0,639.4 1384.0,650.4 1385.0,661.9 1386.0,673.8 1387.0,686.1 1388.0,698.7 1389.0,711.5 1390.0,724.5 1391.0,737.6 1392.0,750.7 1393.0,763.9 1394.0,776.9 1395.0,789.9 1396.0,802.7 1397.0,815.2 1398.0,827.4 1399.0,839.2 1400.0,850.6 1401.0,861.6 1402.0,872.0 1403.0,881.8 1404.0,891.0 1405.0,899.6 1406.0,907.4 1407.0,914.5 1408.0,920.8 1409.0,926.3 1410.0,931.0 1411.0,934.8 1412.0,937.8 1413.0,939.8 1414.0,941.0 1415.0,941.3 1416.0,940.7 1417.0,939.1 1418.0,936.7 1419.0,933.4 1420.0,929.2 1421.0,924.2 1422.0,918.4 1423.0,911.7 1424.0,904.3 1425.0,896.2 1426.0,887.4 1427.0,877.9 1428.0,867.9 1429.0,857.2 1430.0,846.1 1431.0,834.5 1432.0,822.5 1433.0,810.2 1434.0,797.6 1435.0,784.7 1436.0,771.7 1437.0,758.6 1438.0,745.5 1439.0,732.3 1440.0,719.3 1441.0,706.3 1442.0,693.6 1443.0,681.2 1444.0,669.0 1445.0,657.3 1446.0,646.0 1447.0,635.1 1448.0,624.8 1449.0,615.1 1450.0,606.0 1451.0,597.6 1452.0,589.9 1453.0,583.0 1454.0,576.8 1455.0,571.5 1456.0,567.0 1457.0,563.3 1458.0,560.5 1459.0,558.7 1460.0,557.7 1461.0,557.6 1462.0,558.4 1463.0,560.1 1464.0,562.7 1465.0,566.2 1466.0,570.5 1467.0,575.7 1468.0,581.7 1469.0,588.5 1470.0,596.0 1471.0,604.3 1472.0,613.2 1473.0,622.8 1474.0,633.0 1475.0,643.7 1476.0,655.0 1477.0,666.6 1478.0,678.7 1479.0,691.1 1480.0,703.8 1481.0,716.7 1482.0,729.7 1483.0,742.8 1484.0,756.0 1485.0,769.1 1486.0,782.1 1487.0,795.0 1488.0,807.7 1489.0,820.1 1490.0,832.2 1491.0,843.8 1492.0,855.1 1493.0,865.8 1494.0,876.0 1495.0,885.6 1496.0,894.5 1497.0,902.8 1498.0,910.3 1499.0,917.1 1500.0,923.1 1501.0,928.3 1502.0,932.6 1503.0,936.1 1504.0,938.7 1505.0,940.4 1506.0,941.2 1507.0,941.1 1508.0,940.1 1509.0,938.3 1510.0,935.5 1511.0,931.8 1512.0,927.3 1513.0,922.0 1514.0,915.8 1515.0,908.9 1516.0,901.2 1517.0,892.8 1518.0,883.7 1519.0,874.0 1520.0,863.7 1521.0,852.8 1522.0,841.5 1523.0,829.8 1524.0,817.6 1525.0,805.2 1526.0,792.5 1527.0,779.5 1528.0,766.5 1529.0,753.3 1530.0,740.2 1531.0,727.1 1532.0,714.1 1533.0,701.2 1534.0,688.6 1535.0,676.3 1536.0,664.3 1537.0,652.7 1538.0,641.6 1539.0,630.9 1540.0,620.9 1541.0,611.4 1542.0,602.6 1543.0,594.5 1544.0,587.1 1545.0,580.4 1546.0,574.6 1547.0,569.6 1548.0,565.4 1549.0,562.1 1550.0,559.7 1551.0,558.1 1552.0,557.5 1553.0,557.8 1554.0,559.0 1555.0,561.0 1556.0,564.0 1557.0,567.8 1558.0,572.5 1559.0,578.0 1560.0,584.3 1561.0,591.4 1562.0,599.2 1563.0,607.8 1564.0,617.0 1565.0,626.8 1566.0,637.2 1567.0,648.2 1568.0,659.6 1569.0,671.4 1570.0,683.6 1571.0,696.1 1572.0,708.9 1573.0,721.9 1574.0,734.9 1575.0,748.1 1576.0,761.2 1577.0,774.3 1578.0,787.3 1579.0,800.1 1580.0,812.7 1581.0,825.0 1582.0,836.9 1583.0,848.4 1584.0,859.4 1585.0,869.9 1586.0,879.9 1587.0,889.2 1588.0,897.9 1589.0,905.9 1590.0,913.1 1591.0,919.6 1592.0,925.3 1593.0,930.1 1594.0,934.1 1595.0,937.3 1596.0,939.5 1597.0,940.8 1598.0,941.3 1599.0,940.8 1600.0,939.5 1601.0,937.3 1602.0,934.1 1603.0,930.1 1604.0,925.3 1605.0,919.6 1606.0,913.1 1607.0,905.9 1608.0,897.9 1609.0,889.2 1610.0,879.9 1611.0,869.9 1612.0,859.4 1613.0,848.4 1614.0,836.9 1615.0,825.0 1616.0,812.7 1617.0,800.1 1618.0,787.3 1619.0,774.3 1620.0,761.2 1621.0,748.1 1622.0,734.9 1623.0,721.9 1624.0,708.9 1625.0,696.1 1626.0,683.6 1627.0,671.4 1628.0,659.6 1629.0,648.2 1630.0,637.2 1631.0,626.8 1632.0,617.0 1633.0,607.8 1634.0,599.2 1635.0,591.4 1636.0,584.3 1637.0,578.0 1638.0,572.5 1639.0,567.8 1640.0,564.0 1641.0,561.0 1642.0,559.0 1643.0,557.8 1644.0,557.5 1645.0,558.1 1646.0,559.7 1647.0,562.1 1648.0,565.4 1649.0,569.6 1650.0,574.6 1651.0,580.4 1652.0,587.1 1653.0,594.5 1654.0,602.6 1655.0,611.4 1656.0,620.9 1657.0,630.9 1658.0,641.6 1659.0,652.7 1660.0,664.3 1661.0,676.3 1662.0,688.6 1663.0,701.2 1664.0,714.1 1665.0,727.1 1666.0,740.2 1667.0,753.3 1668.0,766.5 1669.0,779.5 1670.0,792.5 1671.0,805.2 1672.0,817.6 1673.0,829.8 1674.0,841.5 1675.0,852.8 1676.0,863.7 1677.0,874.0 1678.0,883.7 1679.0,892.8 1680.0,901.2 1681.0,908.9 1682.0,915.8 1683.0,922.0 1684.0,927.3 1685.0,931.8 1686.0,935.5 1687.0,938.3 1688.0,940.1 1689.0,941.1 1690.0,941.2 1691.0,940.4 1692.0,938.7 1693.0,936.1 1694.0,932.6 1695.0,928.3 1696.0,923.1 1697.0,917.1 1698.0,910.3 1699.0,902.8 1700.0,894.5 1701.0,885.6 1702.0,876.0 1703.0,865.8 1704.0,855.1 1705.0,843.8 1706.0,832.2 1707.0,820.1 1708.0,807.7 1709.0,795.0 1710.0,782.1 1711.0,769.1 1712.0,756.0 1713.0,742.8 1714.0,729.7 1715.0,716.7 1716.0,703.8 1717.0,691.1 1718.0,678.7 1719.0,666.6 1720.0,655.0 1721.0,643.7 1722.0,633.0 1723.0,622.8 1724.0,613.2 1725.0,604.3 1726.0,596.0 1727.0,588.5 1728.0,581.7 1729.0,575.7 1730.0,570.5 1731.0,566.2 1732.0,562.7 1733.0,560.1 1734.0,558.4 1735.0,557.6 1736.0,557.7 1737.0,558.7 1738.0,560.5 1739.0,563.3 1740.0,567.0 1741.0,571.5 1742.0,576.8 1743.0,583.0 1744.0,589.9 1745.0,597.6 1746.0,606.0 1747.0,615.1 1748.0,624.8 1749.0,635.1 1750.0,646.0 1751.0,657.3 1752.0,669.0 1753.0,681.2 1754.0,693.6 1755.0,706.3 1756.0,719.3 1757.0,732.3 1758.0,745.5 1759.0,758.6 1760.0,771.7 1761.0,784.7 1762.0,797.6 1763.0,810.2 1764.0,822.5 1765.0,834.5 1766.0,846.1 1767.0,857.2 1768.0,867.9 1769.0,877.9 1770.0,887.4 1771.0,896.2 1772.0,904.3 1773.0,911.7 1774.0,918.4 1775.0,924.2 1776.0,929.2 1777.0,933.4 1778.0,936.7 1779.0,939.1 1780.0,940.7 1781.0,941.3 1782.0,941.0 1783.0,939.8 1784.0,937.8 1785.0,934.8 1786.0,931.0 1787.0,926.3 1788.0,920.8 1789.0,914.5 1790.0,907.4 1791.0,899.6 1792.0,891.0 1793.0,881.8 1794.0,872.0 1795.0,861.6 1796.0,850.6 1797.0,839.2 1798.0,827.4 1799.0,815.2 1800.0,802.7 1801.0,789.9 1802.0,776.9 1803.0,763.9 1804.0,750.7 1805.0,737.6 1806.0,724.5 1807.0,711.5 1808.0,698.7 1809.0,686.1 1810.0,673.8 1811.0,661.9 1812.0,650.4 1813.0,639.4 1814.0,628.9 1815.0,618.9 1816.0,609.6 1817.0,600.9 1818.0,592.9 1819.0,585.7 1820.0,579.2" fill="none" stroke="#dd5cf5" stroke-width="2.6"/>
<polyline clip-path="url(#cpp)" points="904.1,827.5 905.1,816.7 906.1,805.6 907.1,794.1 908.1,782.3 909.1,770.4 910.1,758.3 911.1,746.1 912.2,733.9 913.2,721.7 914.2,709.6 915.2,697.7 916.2,685.9 917.2,674.4 918.2,663.3 919.2,652.5 920.2,642.1 921.2,632.3 922.2,622.9 923.2,614.1 924.2,605.9 925.2,598.4 926.2,591.6 927.3,585.5 928.3,580.1 929.3,575.6 930.3,571.8 931.3,568.8 932.3,566.7 933.3,565.4 934.3,565.0 935.3,565.4 936.3,566.8 937.3,568.9 938.3,572.0 939.3,575.9 940.4,580.6 941.4,586.1 942.4,592.4 943.4,599.5 944.4,607.2 945.4,615.6 946.4,624.6 947.4,634.2 948.4,644.4 949.4,655.0 950.4,666.0 951.5,677.4 952.5,689.1 953.5,701.1 954.5,713.2 955.5,725.5 956.5,737.8 957.5,750.1 958.5,762.4 959.5,774.5 960.5,786.5 961.5,798.2 962.6,809.6 963.6,820.6 964.6,831.2 965.6,841.4 966.6,851.0 967.6,860.0 968.6,868.4 969.6,876.1 970.6,883.2 971.6,889.5 972.6,895.0 973.7,899.7 974.7,903.6 975.7,906.7 976.7,908.8 977.7,910.2 978.7,910.6 979.7,910.2 980.7,909.1 981.7,907.2 982.7,904.6 983.7,901.2 984.7,897.1 985.7,892.3 986.8,886.9 987.8,880.8 988.8,874.1 989.8,866.7 990.8,858.8 991.8,850.4 992.8,841.5 993.8,832.2 994.8,822.4 995.8,812.3 996.8,801.8 997.8,791.1 998.8,780.2 999.8,769.0 1000.8,757.8 1001.8,746.5 1002.9,735.1 1003.9,723.8 1004.9,712.6 1005.9,701.4 1006.9,690.5 1007.9,679.8 1008.9,669.3 1009.9,659.2 1010.9,649.4 1011.9,640.1 1012.9,631.2 1013.9,622.8 1014.9,614.9 1015.9,607.5 1016.9,600.8 1017.9,594.7 1019.0,589.3 1020.0,584.5 1021.0,580.4 1022.0,577.0 1023.0,574.4 1024.0,572.5 1025.0,571.4 1026.0,571.0 1027.0,571.4 1028.0,572.4 1029.0,574.2 1030.0,576.7 1031.1,579.9 1032.1,583.8 1033.1,588.3 1034.1,593.5 1035.1,599.3 1036.1,605.7 1037.1,612.6 1038.1,620.1 1039.1,628.2 1040.1,636.7 1041.2,645.7 1042.2,655.0 1043.2,664.8 1044.2,674.9 1045.2,685.2 1046.2,695.8 1047.2,706.7 1048.2,717.6 1049.2,728.7 1050.2,739.9 1051.3,751.1 1052.3,762.3 1053.3,773.4 1054.3,784.3 1055.3,795.2 1056.3,805.8 1057.3,816.1 1058.3,826.2 1059.3,836.0 1060.3,845.3 1061.4,854.3 1062.4,862.8 1063.4,870.9 1064.4,878.4 1065.4,885.3 1066.4,891.7 1067.4,897.5 1068.4,902.7 1069.4,907.2 1070.4,911.1 1071.5,914.3 1072.5,916.8 1073.5,918.6 1074.5,919.6 1075.5,920.0 1076.5,919.5 1077.5,918.0 1078.5,915.5 1079.5,912.1 1080.5,907.7 1081.5,902.3 1082.5,896.1 1083.5,889.0 1084.5,881.1 1085.5,872.3 1086.5,862.9 1087.5,852.8 1088.5,842.1 1089.5,830.8 1090.5,818.9 1091.5,806.7 1092.5,794.1 1093.5,781.2 1094.5,768.1 1095.5,754.8 1096.5,741.5 1097.6,728.2 1098.6,714.9 1099.6,701.8 1100.6,688.9 1101.6,676.3 1102.6,664.1 1103.6,652.2 1104.6,640.9 1105.6,630.2 1106.6,620.1 1107.6,610.7 1108.6,601.9 1109.6,594.0 1110.6,586.9 1111.6,580.7 1112.6,575.3 1113.6,570.9 1114.6,567.5 1115.6,565.0 1116.6,563.5 1117.6,563.0 1118.6,563.4 1119.6,564.8 1120.6,567.0 1121.7,570.1 1122.7,574.0 1123.7,578.8 1124.7,584.4 1125.7,590.7 1126.7,597.8 1127.8,605.7 1128.8,614.2 1129.8,623.3 1130.8,633.0 1131.8,643.3 1132.8,654.0 1133.9,665.1 1134.9,676.6 1135.9,688.5 1136.9,700.6 1137.9,712.8 1138.9,725.2 1139.9,737.7 1141.0,750.2 1142.0,762.6 1143.0,774.8 1144.0,786.9 1145.0,798.8 1146.0,810.3 1147.1,821.4 1148.1,832.1 1149.1,842.4 1150.1,852.1 1151.1,861.2 1152.1,869.7 1153.2,877.6 1154.2,884.7 1155.2,891.0 1156.2,896.6 1157.2,901.4 1158.2,905.3 1159.3,908.4 1160.3,910.6 1161.3,912.0 1162.3,912.4 1163.3,912.0 1164.3,910.9 1165.3,909.0 1166.3,906.3 1167.3,903.0 1168.4,898.9 1169.4,894.1 1170.4,888.6 1171.4,882.4 1172.4,875.7 1173.4,868.3 1174.4,860.4 1175.4,851.9 1176.4,843.0 1177.4,833.6 1178.4,823.7 1179.4,813.6 1180.5,803.1 1181.5,792.3 1182.5,781.3 1183.5,770.1 1184.5,758.8 1185.5,747.4 1186.5,736.0 1187.5,724.6 1188.5,713.3 1189.5,702.1 1190.5,691.1 1191.5,680.3 1192.6,669.8 1193.6,659.7 1194.6,649.8 1195.6,640.4 1196.6,631.5 1197.6,623.0 1198.6,615.1 1199.6,607.7 1200.6,601.0 1201.6,594.8 1202.6,589.3 1203.6,584.5 1204.7,580.4 1205.7,577.1 1206.7,574.4 1207.7,572.5 1208.7,571.4 1209.7,571.0 1210.7,571.4 1211.7,572.5 1212.7,574.3 1213.7,576.9 1214.8,580.2 1215.8,584.2 1216.8,588.8 1217.8,594.2 1218.8,600.1 1219.8,606.7 1220.8,613.9 1221.8,621.6 1222.8,629.9 1223.8,638.6 1224.9,647.8 1225.9,657.4 1226.9,667.4 1227.9,677.7 1228.9,688.3 1229.9,699.1 1230.9,710.1 1231.9,721.2 1232.9,732.5 1234.0,743.8 1235.0,755.1 1236.0,766.4 1237.0,777.5 1238.0,788.5 1239.0,799.3 1240.0,809.9 1241.0,820.2 1242.0,830.2 1243.0,839.8 1244.1,849.0 1245.1,857.7 1246.1,866.0 1247.1,873.7 1248.1,880.9 1249.1,887.5 1250.1,893.4 1251.1,898.8 1252.1,903.4 1253.1,907.4 1254.2,910.7 1255.2,913.3 1256.2,915.1 1257.2,916.2 1258.2,916.6 1259.2,916.1 1260.2,914.7 1261.2,912.4 1262.2,909.1 1263.2,905.0 1264.2,899.9 1265.2,894.0 1266.2,887.3 1267.2,879.8 1268.2,871.6 1269.3,862.7 1270.3,853.1 1271.3,842.9 1272.3,832.1 1273.3,820.9 1274.3,809.3 1275.3,797.2 1276.3,784.9 1277.3,772.3 1278.3,759.6 1279.3,746.7 1280.3,733.9 1281.3,721.0 1282.3,708.3 1283.3,695.7 1284.3,683.4 1285.3,671.3 1286.3,659.7 1287.3,648.5 1288.3,637.7 1289.3,627.5 1290.3,617.9 1291.4,609.0 1292.4,600.8 1293.4,593.3 1294.4,586.6 1295.4,580.7 1296.4,575.6 1297.4,571.5 1298.4,568.2 1299.4,565.9 1300.4,564.5 1301.4,564.0 1302.4,564.4 1303.4,565.8 1304.5,568.0 1305.5,571.1 1306.5,575.0 1307.5,579.7 1308.5,585.3 1309.5,591.7 1310.6,598.7 1311.6,606.5 1312.6,615.0 1313.6,624.1 1314.6,633.8 1315.7,644.0 1316.7,654.7 1317.7,665.8 1318.7,677.3 1319.7,689.1 1320.7,701.2 1321.8,713.4 1322.8,725.8 1323.8,738.2 1324.8,750.6 1325.8,763.0 1326.9,775.2 1327.9,787.3 1328.9,799.1 1329.9,810.6 1330.9,821.7 1331.9,832.4 1333.0,842.6 1334.0,852.3 1335.0,861.4 1336.0,869.9 1337.0,877.7 1338.1,884.7 1339.1,891.1 1340.1,896.7 1341.1,901.4 1342.1,905.3 1343.1,908.4 1344.2,910.6 1345.2,912.0 1346.2,912.4 1347.2,912.0 1348.2,910.8 1349.2,908.8 1350.2,906.0 1351.2,902.5 1352.2,898.2 1353.2,893.2 1354.3,887.4 1355.3,881.0 1356.3,873.9 1357.3,866.2 1358.3,858.0 1359.3,849.1 1360.3,839.8 1361.3,830.0 1362.3,819.8 1363.3,809.2 1364.3,798.3 1365.3,787.2 1366.3,775.8 1367.3,764.3 1368.3,752.6 1369.3,740.9 1370.4,729.2 1371.4,717.5 1372.4,706.0 1373.4,694.6 1374.4,683.5 1375.4,672.6 1376.4,662.0 1377.4,651.8 1378.4,642.0 1379.4,632.7 1380.4,623.8 1381.4,615.6 1382.4,607.9 1383.4,600.8 1384.4,594.4 1385.5,588.6 1386.5,583.6 1387.5,579.3 1388.5,575.8 1389.5,573.0 1390.5,571.0 1391.5,569.8 1392.5,569.4 1393.5,569.8 1394.5,570.8 1395.5,572.6 1396.5,575.1 1397.5,578.3 1398.5,582.2 1399.5,586.8 1400.5,591.9 1401.5,597.8 1402.5,604.2 1403.5,611.2 1404.5,618.7 1405.5,626.8 1406.5,635.4 1407.5,644.4 1408.5,653.8 1409.5,663.6 1410.5,673.7 1411.5,684.1 1412.5,694.8 1413.5,705.6 1414.5,716.6 1415.5,727.8 1416.5,739.0 1417.6,750.2 1418.6,761.4 1419.6,772.6 1420.6,783.6 1421.6,794.4 1422.6,805.1 1423.6,815.5 1424.6,825.6 1425.6,835.4 1426.6,844.8 1427.6,853.8 1428.6,862.4 1429.6,870.5 1430.6,878.0 1431.6,885.0 1432.6,891.4 1433.6,897.3 1434.6,902.4 1435.6,907.0 1436.6,910.9 1437.6,914.1 1438.6,916.6 1439.6,918.4 1440.6,919.4 1441.6,919.8 1442.6,919.3 1443.6,917.7 1444.6,915.1 1445.6,911.5 1446.7,906.9 1447.7,901.3 1448.7,894.8 1449.7,887.4 1450.7,879.1 1451.7,870.0 1452.7,860.2 1453.7,849.7 1454.8,838.5 1455.8,826.8 1456.8,814.6 1457.8,801.9 1458.8,788.9 1459.8,775.6 1460.8,762.1 1461.8,748.5 1462.9,734.9 1463.9,721.3 1464.9,707.8 1465.9,694.5 1466.9,681.5 1467.9,668.8 1468.9,656.6 1469.9,644.9 1471.0,633.7 1472.0,623.2 1473.0,613.4 1474.0,604.3 1475.0,596.0 1476.0,588.6 1477.0,582.1 1478.0,576.5 1479.1,571.9 1480.1,568.3 1481.1,565.7 1482.1,564.1 1483.1,563.6 1484.1,564.0 1485.1,565.3 1486.1,567.4 1487.1,570.3 1488.2,574.1 1489.2,578.7 1490.2,584.0 1491.2,590.1 1492.2,596.9 1493.2,604.3 1494.2,612.5 1495.2,621.2 1496.2,630.5 1497.3,640.4 1498.3,650.7 1499.3,661.4 1500.3,672.5 1501.3,683.9 1502.3,695.6 1503.3,707.5 1504.3,719.5 1505.3,731.7 1506.4,743.8 1507.4,756.0 1508.4,768.0 1509.4,779.9 1510.4,791.6 1511.4,803.0 1512.4,814.1 1513.4,824.8 1514.4,835.1 1515.5,845.0 1516.5,854.3 1517.5,863.0 1518.5,871.2 1519.5,878.6 1520.5,885.4 1521.5,891.5 1522.5,896.8 1523.5,901.4 1524.6,905.2 1525.6,908.1 1526.6,910.2 1527.6,911.5 1528.6,911.9 1529.6,911.5 1530.6,910.4 1531.6,908.5 1532.6,905.8 1533.7,902.4 1534.7,898.3 1535.7,893.5 1536.7,888.0 1537.7,881.9 1538.7,875.1 1539.7,867.7 1540.7,859.7 1541.7,851.2 1542.7,842.3 1543.8,832.8 1544.8,823.0 1545.8,812.8 1546.8,802.3 1547.8,791.5 1548.8,780.4 1549.8,769.2 1550.8,757.9 1551.8,746.5 1552.9,735.0 1553.9,723.6 1554.9,712.3 1555.9,701.1 1556.9,690.0 1557.9,679.2 1558.9,668.7 1559.9,658.5 1560.9,648.7 1562.0,639.2 1563.0,630.3 1564.0,621.8 1565.0,613.8 1566.0,606.4 1567.0,599.6 1568.0,593.5 1569.0,588.0 1570.0,583.2 1571.0,579.1 1572.1,575.7 1573.1,573.0 1574.1,571.1 1575.1,570.0 1576.1,569.6 1577.1,570.0 1578.1,571.0 1579.1,572.8 1580.1,575.2 1581.2,578.4 1582.2,582.2 1583.2,586.7 1584.2,591.8 1585.2,597.5 1586.2,603.9 1587.2,610.8 1588.2,618.2 1589.2,626.1 1590.2,634.5 1591.3,643.4 1592.3,652.7 1593.3,662.3 1594.3,672.3 1595.3,682.5 1596.3,693.0 1597.3,703.7 1598.3,714.6 1599.3,725.5 1600.3,736.6 1601.4,747.6 1602.4,758.7 1603.4,769.6 1604.4,780.5 1605.4,791.2 1606.4,801.7 1607.4,811.9 1608.4,821.9 1609.4,831.5 1610.4,840.8 1611.5,849.7 1612.5,858.1 1613.5,866.0 1614.5,873.4 1615.5,880.3 1616.5,886.7 1617.5,892.4 1618.5,897.5 1619.5,902.0 1620.5,905.8 1621.6,909.0 1622.6,911.4 1623.6,913.2 1624.6,914.2 1625.6,914.6 1626.6,914.1 1627.6,912.7 1628.6,910.4 1629.6,907.2 1630.6,903.1 1631.6,898.1 1632.6,892.2 1633.6,885.5 1634.6,878.1 1635.6,869.9 1636.6,861.1 1637.6,851.5 1638.6,841.4 1639.6,830.8 1640.6,819.6 1641.6,808.0 1642.6,796.1 1643.6,783.9 1644.6,771.4 1645.6,758.7 1646.6,746.0 1647.7,733.2 1648.7,720.5 1649.7,707.8 1650.7,695.3 1651.7,683.1 1652.7,671.2 1653.7,659.6 1654.7,648.4 1655.7,637.8 1656.7,627.7 1657.7,618.1 1658.7,609.3 1659.7,601.1 1660.7,593.7 1661.7,587.0 1662.7,581.1 1663.7,576.1 1664.7,572.0 1665.7,568.8 1666.7,566.5 1667.7,565.1 1668.7,564.6 1669.7,565.1 1670.7,566.4 1671.8,568.7 1672.8,571.9 1673.8,576.0 1674.8,580.9 1675.8,586.7 1676.9,593.3 1677.9,600.6 1678.9,608.7 1679.9,617.4 1681.0,626.8 1682.0,636.8 1683.0,647.3 1684.0,658.3 1685.0,669.7 1686.1,681.5 1687.1,693.6 1688.1,705.9 1689.1,718.4 1690.1,730.9 1691.2,743.6 1692.2,756.1 1693.2,768.6 1694.2,780.9 1695.2,793.0 1696.3,804.8 1697.3,816.2 1698.3,827.2 1699.3,837.7 1700.3,847.7 1701.4,857.1 1702.4,865.8 1703.4,873.9 1704.4,881.2 1705.5,887.8 1706.5,893.6 1707.5,898.5 1708.5,902.6 1709.5,905.8 1710.6,908.1 1711.6,909.4 1712.6,909.9 1713.6,909.5 1714.6,908.4 1715.6,906.6 1716.6,904.1 1717.6,900.9 1718.6,897.0 1719.6,892.4 1720.6,887.1 1721.6,881.3 1722.6,874.8 1723.6,867.7 1724.6,860.1 1725.6,852.0 1726.6,843.4 1727.6,834.4 1728.6,825.0 1729.6,815.1 1730.6,805.0 1731.6,794.6 1732.6,784.0 1733.6,773.1 1734.6,762.2 1735.6,751.1 1736.6,740.0 1737.6,728.9 1738.6,717.8 1739.6,706.9 1740.6,696.0 1741.6,685.4 1742.6,675.0 1743.6,664.9 1744.6,655.1 1745.6,645.6 1746.6,636.6 1747.6,628.0 1748.6,619.9 1749.6,612.3 1750.6,605.2 1751.6,598.7 1752.6,592.9 1753.6,587.6 1754.6,583.0 1755.6,579.1 1756.6,575.9 1757.6,573.4 1758.6,571.6 1759.6,570.5 1760.6,570.1 1761.6,570.5 1762.6,571.5 1763.6,573.3 1764.6,575.8 1765.6,579.0 1766.6,582.9 1767.6,587.4 1768.6,592.6 1769.6,598.4 1770.6,604.8 1771.6,611.8 1772.6,619.3 1773.6,627.4 1774.6,635.9 1775.6,644.9 1776.6,654.3 1777.6,664.1 1778.6,674.2 1779.6,684.6 1780.6,695.2 1781.6,706.0 1782.6,717.0 1783.6,728.2 1784.6,739.3 1785.6,750.6 1786.6,761.7 1787.6,772.9 1788.6,783.9 1789.6,794.7 1790.6,805.3 1791.6,815.7 1792.6,825.8 1793.6,835.6 1794.6,845.0 1795.6,854.0 1796.6,862.5 1797.6,870.6 1798.6,878.1 1799.6,885.1 1800.6,891.5 1801.6,897.3 1802.6,902.5 1803.6,907.0 1804.6,910.9 1805.6,914.1 1806.6,916.6 1807.6,918.4 1808.6,919.4 1809.6,919.8 1810.6,919.4 1811.6,918.0 1812.6,915.8 1813.6,912.7 1814.6,908.8 1815.7,904.0 1816.7,898.4 1817.7,892.0 1818.7,884.9 1819.7,877.1" fill="none" stroke="#2f8f2f" stroke-width="2.6"/>
<path d="M904.0,943.4 L905.5,942.4 M905.5,942.4 L907.0,943.3 M907.0,943.3 L908.5,944.0 M908.5,944.0 L910.0,943.0 M910.0,943.0 L911.5,944.2 M917.5,943.0 L919.0,944.1 M919.0,944.1 L920.5,943.2 M920.5,943.2 L922.0,944.0 M922.0,944.0 L923.5,944.3 M926.5,943.3 L928.0,943.3 M928.0,943.3 L929.5,943.4 M932.5,942.6 L934.0,943.7 M934.0,943.7 L935.5,943.8 M935.5,943.8 L937.0,942.7 M937.0,942.7 L938.5,942.5 M941.5,944.4 L943.0,942.4 M943.0,942.4 L944.5,942.2 M944.5,942.2 L946.0,944.2 M946.0,944.2 L947.5,942.7 M947.5,942.7 L949.0,944.2 M949.0,944.2 L950.5,942.3 M950.5,942.3 L952.0,944.1 M952.0,944.1 L953.5,944.2 M953.5,944.2 L955.0,942.6 M955.0,942.6 L956.5,943.2 M956.5,943.2 L958.0,944.0 M958.0,944.0 L959.5,944.1 M959.5,944.1 L961.0,944.1 M961.0,944.1 L962.5,943.9 M967.0,943.9 L968.5,942.5 M971.5,943.9 L973.0,942.7 M973.0,942.7 L974.5,943.7 M974.5,943.7 L976.0,944.2 M976.0,944.2 L977.5,943.9 M977.5,943.9 L979.0,943.6 M979.0,943.6 L980.5,942.3 M991.0,942.5 L992.5,943.5 M998.5,943.1 L1000.0,944.0 M1000.0,944.0 L1001.5,944.2 M1004.5,943.0 L1006.0,942.4 M1006.0,942.4 L1007.5,944.4 M1007.5,944.4 L1009.0,943.4 M1009.0,943.4 L1010.5,944.0 M1010.5,944.0 L1012.0,943.1 M1015.0,942.2 L1016.5,942.9 M1016.5,942.9 L1018.0,944.1 M1022.5,944.4 L1024.0,943.3 M1036.0,943.5 L1037.5,942.5 M1037.5,942.5 L1039.0,943.0 M1039.0,943.0 L1040.5,943.1 M1040.5,943.1 L1042.0,944.2 M1045.0,942.8 L1046.5,942.8 M1049.5,944.2 L1051.0,944.3 M1051.0,944.3 L1052.5,943.3 M1052.5,943.3 L1054.0,942.9 M1057.0,943.8 L1058.5,943.7 M1058.5,943.7 L1060.0,944.0 M1060.0,944.0 L1061.5,942.4 M1064.5,943.7 L1066.0,944.0 M1069.0,942.5 L1070.5,943.1 M1070.5,943.1 L1072.0,944.1 M1076.5,943.8 L1078.0,943.4 M1078.0,943.4 L1079.5,943.9 M1079.5,943.9 L1081.0,943.0 M1084.0,942.2 L1085.5,944.2 M1085.5,944.2 L1087.0,942.5 M1087.0,942.5 L1088.5,942.8 M1088.5,942.8 L1090.0,943.7 M1090.0,943.7 L1091.5,944.4 M1091.5,944.4 L1093.0,943.4 M1093.0,943.4 L1094.5,942.6 M1094.5,942.6 L1096.0,944.1 M1096.0,944.1 L1097.5,943.0 M1097.5,943.0 L1099.0,943.0 M1102.0,942.9 L1103.5,943.4 M1103.5,943.4 L1105.0,944.4 M1105.0,944.4 L1106.5,942.8 M1106.5,942.8 L1108.0,943.8 M1108.0,943.8 L1109.5,942.9 M1109.5,942.9 L1111.0,943.0 M1111.0,943.0 L1112.5,943.5 M1112.5,943.5 L1114.0,942.4 M1114.0,942.4 L1115.5,942.3 M1115.5,942.3 L1117.0,944.1 M1120.0,943.6 L1121.5,942.5 M1121.5,942.5 L1123.0,942.3 M1123.0,942.3 L1124.5,943.0 M1135.0,942.5 L1136.5,944.2 M1136.5,944.2 L1138.0,943.2 M1138.0,943.2 L1139.5,943.3 M1139.5,943.3 L1141.0,942.6 M1141.0,942.6 L1142.5,942.6 M1142.5,942.6 L1144.0,943.7 M1144.0,943.7 L1145.5,944.1 M1145.5,944.1 L1147.0,943.3 M1147.0,943.3 L1148.5,942.6 M1148.5,942.6 L1150.0,942.3 M1150.0,942.3 L1151.5,942.3 M1151.5,942.3 L1153.0,943.9 M1153.0,943.9 L1154.5,943.8 M1154.5,943.8 L1156.0,943.0 M1156.0,943.0 L1157.5,942.5 M1157.5,942.5 L1159.0,943.7 M1163.5,942.3 L1165.0,943.1 M1165.0,943.1 L1166.5,943.2 M1166.5,943.2 L1168.0,943.1 M1168.0,943.1 L1169.5,942.3 M1172.5,943.2 L1174.0,942.9 M1174.0,942.9 L1175.5,943.2 M1178.5,943.8 L1180.0,944.1 M1183.0,943.4 L1184.5,944.0 M1184.5,944.0 L1186.0,942.4 M1186.0,942.4 L1187.5,942.7 M1187.5,942.7 L1189.0,944.0 M1189.0,944.0 L1190.5,942.9 M1190.5,942.9 L1192.0,943.6 M1192.0,943.6 L1193.5,944.2 M1193.5,944.2 L1195.0,944.1 M1195.0,944.1 L1196.5,943.8 M1196.5,943.8 L1198.0,943.2 M1198.0,943.2 L1199.5,943.6 M1199.5,943.6 L1201.0,943.2 M1201.0,943.2 L1202.5,944.0 M1202.5,944.0 L1204.0,943.0 M1204.0,943.0 L1205.5,942.5 M1205.5,942.5 L1207.0,942.5 M1214.5,942.4 L1216.0,943.9 M1216.0,943.9 L1217.5,943.8 M1217.5,943.8 L1219.0,942.6 M1219.0,942.6 L1220.5,942.7 M1220.5,942.7 L1222.0,943.5 M1222.0,943.5 L1223.5,944.4 M1226.5,942.3 L1228.0,943.3 M1228.0,943.3 L1229.5,943.3 M1229.5,943.3 L1231.0,944.0 M1231.0,944.0 L1232.5,944.2 M1232.5,944.2 L1234.0,943.2 M1234.0,943.2 L1235.5,943.1 M1235.5,943.1 L1237.0,944.0 M1243.0,943.4 L1244.5,943.7 M1244.5,943.7 L1246.0,943.3 M1246.0,943.3 L1247.5,943.1 M1250.5,944.0 L1252.0,942.8 M1252.0,942.8 L1253.5,944.0 M1253.5,944.0 L1255.0,943.3 M1259.5,943.0 L1261.0,943.1 M1265.5,942.8 L1267.0,942.6 M1270.0,942.9 L1271.5,942.7 M1271.5,942.7 L1273.0,942.8 M1273.0,942.8 L1274.5,943.6 M1274.5,943.6 L1276.0,944.4 M1276.0,944.4 L1277.5,943.0 M1280.5,942.9 L1282.0,942.9 M1282.0,942.9 L1283.5,943.2 M1283.5,943.2 L1285.0,942.2 M1285.0,942.2 L1286.5,942.9 M1286.5,942.9 L1288.0,942.2 M1288.0,942.2 L1289.5,943.0 M1289.5,943.0 L1291.0,943.8 M1291.0,943.8 L1292.5,944.3 M1292.5,944.3 L1294.0,943.6 M1297.0,943.2 L1298.5,942.3 M1298.5,942.3 L1300.0,942.2 M1300.0,942.2 L1301.5,942.6 M1301.5,942.6 L1303.0,943.1 M1306.0,944.0 L1307.5,944.0 M1307.5,944.0 L1309.0,943.1 M1309.0,943.1 L1310.5,942.3 M1310.5,942.3 L1312.0,943.2 M1312.0,943.2 L1313.5,943.6 M1313.5,943.6 L1315.0,943.0 M1315.0,943.0 L1316.5,943.8 M1316.5,943.8 L1318.0,943.7 M1318.0,943.7 L1319.5,943.9 M1319.5,943.9 L1321.0,944.1 M1328.5,943.5 L1330.0,942.3 M1336.0,943.1 L1337.5,943.0 M1337.5,943.0 L1339.0,944.0 M1339.0,944.0 L1340.5,943.2 M1340.5,943.2 L1342.0,943.4 M1342.0,943.4 L1343.5,943.4 M1343.5,943.4 L1345.0,943.1 M1345.0,943.1 L1346.5,942.7 M1352.5,942.7 L1354.0,943.6 M1354.0,943.6 L1355.5,942.9 M1355.5,942.9 L1357.0,943.1 M1357.0,943.1 L1358.5,942.7 M1363.0,944.3 L1364.5,943.8 M1364.5,943.8 L1366.0,943.0 M1366.0,943.0 L1367.5,943.2 M1367.5,943.2 L1369.0,944.2 M1369.0,944.2 L1370.5,943.2 M1370.5,943.2 L1372.0,943.6 M1372.0,943.6 L1373.5,943.9 M1376.5,944.2 L1378.0,942.6 M1378.0,942.6 L1379.5,942.7 M1379.5,942.7 L1381.0,943.5 M1381.0,943.5 L1382.5,942.6 M1391.5,944.2 L1393.0,943.2 M1393.0,943.2 L1394.5,942.9 M1394.5,942.9 L1396.0,942.7 M1396.0,942.7 L1397.5,943.9 M1397.5,943.9 L1399.0,944.2 M1399.0,944.2 L1400.5,942.8 M1400.5,942.8 L1402.0,943.8 M1402.0,943.8 L1403.5,943.6 M1403.5,943.6 L1405.0,943.6 M1405.0,943.6 L1406.5,942.8 M1409.5,942.4 L1411.0,942.6 M1411.0,942.6 L1412.5,943.7 M1415.5,943.9 L1417.0,943.6 M1417.0,943.6 L1418.5,943.5 M1418.5,943.5 L1420.0,944.0 M1420.0,944.0 L1421.5,942.6 M1421.5,942.6 L1423.0,942.6 M1423.0,942.6 L1424.5,944.0 M1424.5,944.0 L1426.0,942.5 M1426.0,942.5 L1427.5,944.4 M1427.5,944.4 L1429.0,943.2 M1429.0,943.2 L1430.5,942.3 M1430.5,942.3 L1432.0,942.6 M1432.0,942.6 L1433.5,943.2 M1433.5,943.2 L1435.0,944.2 M1438.0,944.2 L1439.5,944.1 M1439.5,944.1 L1441.0,943.0 M1441.0,943.0 L1442.5,943.9 M1442.5,943.9 L1444.0,943.3 M1444.0,943.3 L1445.5,943.5 M1445.5,943.5 L1447.0,942.3 M1447.0,942.3 L1448.5,943.3 M1448.5,943.3 L1450.0,942.8 M1450.0,942.8 L1451.5,942.4 M1451.5,942.4 L1453.0,942.6 M1457.5,942.3 L1459.0,943.2 M1459.0,943.2 L1460.5,942.6 M1460.5,942.6 L1462.0,943.5 M1465.0,943.6 L1466.5,944.0 M1469.5,944.3 L1471.0,944.1 M1471.0,944.1 L1472.5,942.7 M1472.5,942.7 L1474.0,944.3 M1477.0,944.3 L1478.5,944.0 M1478.5,944.0 L1480.0,943.9 M1480.0,943.9 L1481.5,943.1 M1481.5,943.1 L1483.0,944.0 M1483.0,944.0 L1484.5,944.0 M1484.5,944.0 L1486.0,943.7 M1486.0,943.7 L1487.5,942.6 M1496.5,942.6 L1498.0,943.2 M1501.0,943.0 L1502.5,944.4 M1502.5,944.4 L1504.0,943.6 M1504.0,943.6 L1505.5,942.8 M1505.5,942.8 L1507.0,944.1 M1507.0,944.1 L1508.5,943.7 M1508.5,943.7 L1510.0,942.5 M1513.0,943.8 L1514.5,944.1 M1519.0,944.2 L1520.5,942.8 M1520.5,942.8 L1522.0,943.3 M1522.0,943.3 L1523.5,942.3 M1523.5,942.3 L1525.0,942.5 M1525.0,942.5 L1526.5,942.7 M1526.5,942.7 L1528.0,942.4 M1528.0,942.4 L1529.5,942.6 M1529.5,942.6 L1531.0,943.2 M1534.0,943.7 L1535.5,944.2 M1535.5,944.2 L1537.0,943.4 M1537.0,943.4 L1538.5,943.6 M1538.5,943.6 L1540.0,944.2 M1543.0,942.6 L1544.5,944.4 M1544.5,944.4 L1546.0,942.8 M1546.0,942.8 L1547.5,943.2 M1550.5,942.6 L1552.0,943.0 M1552.0,943.0 L1553.5,943.6 M1553.5,943.6 L1555.0,943.7 M1555.0,943.7 L1556.5,943.5 M1556.5,943.5 L1558.0,943.8 M1558.0,943.8 L1559.5,942.8 M1559.5,942.8 L1561.0,942.3 M1561.0,942.3 L1562.5,942.8 M1562.5,942.8 L1564.0,942.6 M1564.0,942.6 L1565.5,944.1 M1565.5,944.1 L1567.0,942.9 M1567.0,942.9 L1568.5,944.0 M1568.5,944.0 L1570.0,942.6 M1570.0,942.6 L1571.5,944.2 M1571.5,944.2 L1573.0,944.1 M1573.0,944.1 L1574.5,943.5 M1574.5,943.5 L1576.0,942.4 M1576.0,942.4 L1577.5,943.3 M1580.5,943.6 L1582.0,943.5 M1582.0,943.5 L1583.5,943.5 M1583.5,943.5 L1585.0,942.2 M1585.0,942.2 L1586.5,942.9 M1586.5,942.9 L1588.0,944.4 M1588.0,944.4 L1589.5,943.6 M1589.5,943.6 L1591.0,944.2 M1591.0,944.2 L1592.5,943.3 M1592.5,943.3 L1594.0,942.6 M1594.0,942.6 L1595.5,944.1 M1595.5,944.1 L1597.0,942.4 M1597.0,942.4 L1598.5,943.6 M1598.5,943.6 L1600.0,944.1 M1600.0,944.1 L1601.5,942.2 M1606.0,943.0 L1607.5,944.2 M1607.5,944.2 L1609.0,943.1 M1616.5,943.2 L1618.0,943.2 M1625.5,943.9 L1627.0,942.6 M1627.0,942.6 L1628.5,943.2 M1628.5,943.2 L1630.0,944.3 M1633.0,943.0 L1634.5,942.9 M1634.5,942.9 L1636.0,943.6 M1636.0,943.6 L1637.5,942.6 M1637.5,942.6 L1639.0,944.0 M1639.0,944.0 L1640.5,944.1 M1640.5,944.1 L1642.0,943.1 M1642.0,943.1 L1643.5,943.3 M1643.5,943.3 L1645.0,943.2 M1645.0,943.2 L1646.5,943.0 M1646.5,943.0 L1648.0,942.9 M1648.0,942.9 L1649.5,942.3 M1649.5,942.3 L1651.0,943.4 M1651.0,943.4 L1652.5,943.0 M1652.5,943.0 L1654.0,942.7 M1667.5,942.8 L1669.0,942.7 M1669.0,942.7 L1670.5,943.1 M1670.5,943.1 L1672.0,944.1 M1672.0,944.1 L1673.5,943.3 M1673.5,943.3 L1675.0,944.3 M1675.0,944.3 L1676.5,943.2 M1676.5,943.2 L1678.0,943.7 M1678.0,943.7 L1679.5,943.9 M1688.5,944.2 L1690.0,944.1 M1690.0,944.1 L1691.5,942.3 M1691.5,942.3 L1693.0,943.9 M1693.0,943.9 L1694.5,943.7 M1697.5,943.5 L1699.0,943.1 M1708.0,942.4 L1709.5,942.6 M1709.5,942.6 L1711.0,943.4 M1717.0,944.3 L1718.5,942.8 M1724.5,943.4 L1726.0,943.9 M1726.0,943.9 L1727.5,942.8 M1727.5,942.8 L1729.0,944.0 M1729.0,944.0 L1730.5,942.9 M1730.5,942.9 L1732.0,943.6 M1732.0,943.6 L1733.5,942.5 M1733.5,942.5 L1735.0,943.9 M1735.0,943.9 L1736.5,942.4 M1736.5,942.4 L1738.0,943.8 M1741.0,943.4 L1742.5,943.2 M1742.5,943.2 L1744.0,943.1 M1747.0,944.2 L1748.5,942.7 M1748.5,942.7 L1750.0,943.8 M1753.0,942.2 L1754.5,943.4 M1757.5,943.3 L1759.0,943.2 M1759.0,943.2 L1760.5,943.6 M1760.5,943.6 L1762.0,942.7 M1765.0,942.9 L1766.5,942.3 M1766.5,942.3 L1768.0,942.7 M1768.0,942.7 L1769.5,943.1 M1769.5,943.1 L1771.0,943.4 M1771.0,943.4 L1772.5,942.7 M1772.5,942.7 L1774.0,943.9 M1774.0,943.9 L1775.5,943.9 M1775.5,943.9 L1777.0,943.3 M1777.0,943.3 L1778.5,943.1 M1781.5,944.0 L1783.0,944.4 M1783.0,944.4 L1784.5,943.4 M1784.5,943.4 L1786.0,943.8 M1789.0,943.1 L1790.5,942.7 M1790.5,942.7 L1792.0,944.1 M1792.0,944.1 L1793.5,944.3 M1793.5,944.3 L1795.0,943.0 M1795.0,943.0 L1796.5,943.8 M1799.5,944.0 L1801.0,944.0 M1801.0,944.0 L1802.5,942.6 M1802.5,942.6 L1804.0,944.3 M1804.0,944.3 L1805.5,943.6 M1805.5,943.6 L1807.0,942.3 M1807.0,942.3 L1808.5,943.3 M1808.5,943.3 L1810.0,942.2 M1810.0,942.2 L1811.5,943.4 M1811.5,943.4 L1813.0,944.3 M1813.0,944.3 L1814.5,942.4 M1814.5,942.4 L1816.0,943.5 M1816.0,943.5 L1817.5,943.5" fill="none" stroke="#c9ec62" stroke-width="2.8"/>
<polygon points="904,951.2 904.0,944.8 905.5,944.2 907.0,944.4 908.5,944.5 910.0,943.4 911.5,945.1 913.0,943.0 914.5,943.9 916.0,944.1 917.5,944.4 919.0,943.7 920.5,942.8 922.0,944.9 923.5,944.3 925.0,944.4 926.5,944.4 928.0,944.0 929.5,944.8 931.0,945.1 932.5,944.5 934.0,944.4 935.5,944.5 937.0,943.9 938.5,941.7 940.0,944.6 941.5,943.9 943.0,945.2 944.5,941.9 946.0,944.6 947.5,943.1 949.0,944.3 950.5,943.2 952.0,944.4 953.5,945.0 955.0,944.7 956.5,943.4 958.0,944.7 959.5,944.5 961.0,943.6 962.5,944.7 964.0,944.7 965.5,944.1 967.0,943.7 968.5,944.7 970.0,941.5 971.5,944.0 973.0,943.6 974.5,942.8 976.0,943.3 977.5,944.6 979.0,943.5 980.5,942.3 982.0,943.7 983.5,942.7 985.0,943.9 986.5,942.8 988.0,943.3 989.5,945.1 991.0,944.1 992.5,944.6 994.0,945.2 995.5,943.6 997.0,944.7 998.5,944.9 1000.0,944.1 1001.5,944.5 1003.0,943.5 1004.5,944.1 1006.0,944.5 1007.5,944.7 1009.0,943.6 1010.5,943.2 1012.0,944.3 1013.5,944.6 1015.0,944.2 1016.5,944.0 1018.0,945.2 1019.5,944.5 1021.0,944.3 1022.5,944.2 1024.0,944.2 1025.5,943.5 1027.0,944.6 1028.5,944.6 1030.0,943.9 1031.5,943.5 1033.0,944.9 1034.5,944.3 1036.0,944.5 1037.5,943.9 1039.0,944.8 1040.5,943.1 1042.0,944.8 1043.5,945.0 1045.0,945.0 1046.5,943.8 1048.0,944.9 1049.5,942.9 1051.0,944.3 1052.5,944.5 1054.0,944.7 1055.5,944.6 1057.0,943.8 1058.5,943.7 1060.0,944.4 1061.5,944.1 1063.0,942.6 1064.5,944.0 1066.0,943.1 1067.5,943.5 1069.0,945.0 1070.5,944.4 1072.0,944.5 1073.5,941.3 1075.0,944.1 1076.5,943.9 1078.0,945.0 1079.5,945.2 1081.0,944.3 1082.5,944.6 1084.0,943.7 1085.5,944.5 1087.0,943.8 1088.5,944.5 1090.0,944.2 1091.5,944.6 1093.0,943.5 1094.5,943.4 1096.0,945.2 1097.5,944.9 1099.0,944.7 1100.5,944.3 1102.0,944.5 1103.5,943.6 1105.0,943.6 1106.5,940.8 1108.0,944.3 1109.5,943.7 1111.0,945.1 1112.5,944.0 1114.0,944.7 1115.5,943.6 1117.0,944.4 1118.5,943.8 1120.0,944.7 1121.5,944.6 1123.0,944.6 1124.5,942.3 1126.0,945.2 1127.5,943.7 1129.0,943.9 1130.5,943.8 1132.0,943.8 1133.5,945.0 1135.0,944.5 1136.5,944.7 1138.0,945.2 1139.5,944.8 1141.0,944.5 1142.5,943.7 1144.0,944.1 1145.5,944.7 1147.0,943.6 1148.5,941.6 1150.0,944.2 1151.5,944.5 1153.0,944.6 1154.5,945.2 1156.0,944.5 1157.5,944.2 1159.0,944.8 1160.5,944.6 1162.0,945.0 1163.5,944.4 1165.0,944.8 1166.5,943.1 1168.0,944.0 1169.5,943.5 1171.0,941.5 1172.5,944.5 1174.0,944.8 1175.5,943.6 1177.0,944.1 1178.5,941.7 1180.0,944.0 1181.5,944.0 1183.0,944.5 1184.5,944.1 1186.0,942.4 1187.5,944.4 1189.0,944.1 1190.5,944.9 1192.0,943.4 1193.5,944.6 1195.0,943.4 1196.5,940.7 1198.0,944.3 1199.5,943.7 1201.0,943.5 1202.5,943.8 1204.0,940.8 1205.5,943.9 1207.0,943.7 1208.5,944.2 1210.0,944.8 1211.5,942.4 1213.0,943.8 1214.5,944.8 1216.0,943.7 1217.5,944.2 1219.0,942.7 1220.5,944.0 1222.0,943.6 1223.5,943.8 1225.0,943.7 1226.5,940.6 1228.0,944.8 1229.5,943.6 1231.0,944.8 1232.5,943.4 1234.0,944.6 1235.5,944.7 1237.0,943.6 1238.5,944.0 1240.0,942.1 1241.5,944.1 1243.0,944.8 1244.5,944.0 1246.0,944.6 1247.5,942.6 1249.0,944.4 1250.5,944.5 1252.0,944.3 1253.5,944.6 1255.0,944.8 1256.5,944.7 1258.0,944.7 1259.5,944.0 1261.0,943.5 1262.5,943.9 1264.0,943.1 1265.5,944.7 1267.0,943.5 1268.5,943.9 1270.0,944.8 1271.5,945.0 1273.0,944.7 1274.5,944.6 1276.0,943.7 1277.5,941.5 1279.0,945.0 1280.5,944.5 1282.0,944.0 1283.5,943.6 1285.0,945.2 1286.5,944.4 1288.0,944.4 1289.5,944.0 1291.0,943.5 1292.5,943.4 1294.0,943.7 1295.5,943.9 1297.0,945.1 1298.5,944.5 1300.0,944.8 1301.5,944.8 1303.0,944.9 1304.5,943.4 1306.0,944.0 1307.5,943.9 1309.0,943.7 1310.5,942.4 1312.0,945.2 1313.5,943.5 1315.0,945.2 1316.5,944.2 1318.0,945.0 1319.5,944.7 1321.0,945.0 1322.5,943.4 1324.0,944.7 1325.5,944.8 1327.0,943.7 1328.5,944.2 1330.0,941.1 1331.5,944.9 1333.0,944.3 1334.5,944.1 1336.0,943.5 1337.5,942.7 1339.0,943.9 1340.5,944.9 1342.0,944.2 1343.5,943.5 1345.0,942.4 1346.5,945.1 1348.0,945.0 1349.5,944.6 1351.0,944.0 1352.5,943.5 1354.0,944.3 1355.5,944.5 1357.0,943.9 1358.5,944.5 1360.0,944.3 1361.5,944.4 1363.0,945.1 1364.5,945.1 1366.0,944.2 1367.5,943.7 1369.0,944.6 1370.5,944.8 1372.0,943.1 1373.5,941.7 1375.0,943.5 1376.5,944.1 1378.0,944.7 1379.5,944.1 1381.0,944.3 1382.5,943.6 1384.0,944.7 1385.5,943.8 1387.0,943.7 1388.5,944.7 1390.0,945.0 1391.5,943.7 1393.0,944.6 1394.5,943.8 1396.0,945.1 1397.5,945.1 1399.0,944.2 1400.5,941.2 1402.0,943.8 1403.5,945.2 1405.0,944.4 1406.5,943.4 1408.0,945.1 1409.5,944.4 1411.0,944.5 1412.5,943.5 1414.0,943.5 1415.5,943.7 1417.0,943.9 1418.5,944.6 1420.0,944.2 1421.5,944.8 1423.0,944.2 1424.5,945.0 1426.0,943.1 1427.5,944.5 1429.0,943.5 1430.5,944.0 1432.0,941.6 1433.5,944.9 1435.0,944.8 1436.5,944.9 1438.0,944.1 1439.5,944.5 1441.0,943.7 1442.5,944.1 1444.0,943.4 1445.5,943.9 1447.0,944.7 1448.5,944.2 1450.0,945.1 1451.5,944.5 1453.0,944.4 1454.5,944.2 1456.0,943.6 1457.5,944.3 1459.0,942.9 1460.5,941.6 1462.0,944.2 1463.5,941.7 1465.0,943.8 1466.5,945.0 1468.0,943.2 1469.5,941.8 1471.0,944.2 1472.5,943.5 1474.0,944.5 1475.5,943.9 1477.0,943.7 1478.5,944.7 1480.0,945.2 1481.5,944.7 1483.0,943.3 1484.5,944.7 1486.0,944.7 1487.5,941.0 1489.0,943.7 1490.5,944.2 1492.0,944.2 1493.5,943.5 1495.0,941.9 1496.5,944.5 1498.0,944.8 1499.5,944.5 1501.0,943.5 1502.5,944.2 1504.0,944.8 1505.5,945.0 1507.0,941.3 1508.5,945.0 1510.0,945.0 1511.5,944.6 1513.0,945.1 1514.5,943.4 1516.0,943.4 1517.5,943.7 1519.0,942.7 1520.5,944.9 1522.0,944.6 1523.5,944.8 1525.0,944.4 1526.5,945.1 1528.0,944.2 1529.5,943.3 1531.0,944.6 1532.5,943.5 1534.0,943.5 1535.5,943.7 1537.0,945.2 1538.5,944.1 1540.0,944.1 1541.5,942.0 1543.0,943.1 1544.5,943.6 1546.0,942.7 1547.5,944.0 1549.0,944.2 1550.5,943.5 1552.0,943.8 1553.5,943.7 1555.0,944.6 1556.5,945.2 1558.0,944.7 1559.5,944.3 1561.0,944.0 1562.5,944.8 1564.0,944.1 1565.5,944.3 1567.0,944.6 1568.5,944.0 1570.0,944.3 1571.5,942.9 1573.0,944.7 1574.5,943.9 1576.0,943.8 1577.5,945.1 1579.0,943.5 1580.5,943.4 1582.0,944.6 1583.5,943.4 1585.0,945.0 1586.5,943.8 1588.0,943.8 1589.5,944.7 1591.0,943.9 1592.5,942.2 1594.0,941.8 1595.5,942.3 1597.0,943.5 1598.5,944.6 1600.0,944.9 1601.5,943.1 1603.0,944.0 1604.5,943.9 1606.0,944.4 1607.5,945.0 1609.0,943.0 1610.5,943.7 1612.0,943.3 1613.5,944.2 1615.0,943.8 1616.5,942.8 1618.0,945.1 1619.5,943.8 1621.0,943.3 1622.5,944.2 1624.0,943.8 1625.5,944.4 1627.0,943.7 1628.5,944.9 1630.0,941.2 1631.5,944.0 1633.0,944.9 1634.5,944.2 1636.0,943.8 1637.5,944.0 1639.0,944.0 1640.5,945.1 1642.0,944.1 1643.5,944.3 1645.0,944.6 1646.5,943.6 1648.0,944.4 1649.5,944.4 1651.0,943.6 1652.5,943.5 1654.0,942.1 1655.5,943.4 1657.0,944.9 1658.5,944.8 1660.0,944.9 1661.5,942.6 1663.0,944.6 1664.5,944.3 1666.0,944.3 1667.5,945.2 1669.0,944.7 1670.5,944.1 1672.0,945.0 1673.5,944.3 1675.0,943.5 1676.5,942.0 1678.0,944.8 1679.5,943.8 1681.0,943.6 1682.5,944.4 1684.0,943.5 1685.5,944.3 1687.0,943.7 1688.5,943.9 1690.0,943.7 1691.5,943.4 1693.0,944.0 1694.5,943.9 1696.0,941.3 1697.5,944.7 1699.0,942.0 1700.5,944.6 1702.0,944.1 1703.5,943.5 1705.0,945.1 1706.5,945.0 1708.0,943.6 1709.5,944.9 1711.0,943.8 1712.5,941.9 1714.0,945.1 1715.5,943.8 1717.0,943.6 1718.5,943.5 1720.0,944.3 1721.5,944.1 1723.0,943.8 1724.5,944.0 1726.0,943.9 1727.5,944.6 1729.0,944.9 1730.5,944.0 1732.0,944.6 1733.5,943.6 1735.0,943.5 1736.5,943.5 1738.0,944.6 1739.5,944.3 1741.0,945.1 1742.5,944.2 1744.0,943.9 1745.5,944.8 1747.0,944.8 1748.5,944.0 1750.0,944.3 1751.5,944.0 1753.0,944.5 1754.5,944.3 1756.0,945.0 1757.5,944.0 1759.0,944.2 1760.5,943.5 1762.0,944.7 1763.5,943.4 1765.0,944.9 1766.5,943.4 1768.0,944.7 1769.5,943.9 1771.0,943.8 1772.5,943.9 1774.0,943.0 1775.5,943.5 1777.0,944.3 1778.5,943.9 1780.0,945.0 1781.5,944.2 1783.0,944.5 1784.5,944.0 1786.0,945.1 1787.5,943.5 1789.0,944.0 1790.5,941.5 1792.0,943.7 1793.5,944.1 1795.0,942.5 1796.5,944.8 1798.0,944.3 1799.5,944.5 1801.0,944.7 1802.5,943.9 1804.0,944.5 1805.5,944.4 1807.0,944.1 1808.5,944.7 1810.0,944.4 1811.5,943.6 1813.0,944.5 1814.5,943.4 1816.0,944.5 1817.5,943.9 1819.0,943.9 1820.5,944.0 1820.5,951.2" fill="#030303"/>
<rect x="1301.7" y="944.9" width="2.1" height="1.6" fill="#5aa8e8"/>
<rect x="1608.1" y="944.6" width="3.9" height="1.6" fill="#5aa8e8"/>
<rect x="1216.3" y="945.1" width="1.5" height="1.6" fill="#5aa8e8"/>
<rect x="1284.3" y="945.2" width="2.1" height="1.6" fill="#5aa8e8"/>
<rect x="1464.8" y="943.8" width="2.5" height="1.6" fill="#5aa8e8"/>
<rect x="1812.2" y="943.7" width="3.8" height="1.6" fill="#5aa8e8"/>
<rect x="958.6" y="944.7" width="3.6" height="1.6" fill="#5aa8e8"/>
<rect x="1669.3" y="944.2" width="3.0" height="1.6" fill="#5aa8e8"/>
<rect x="1554.9" y="945.2" width="3.4" height="1.6" fill="#5aa8e8"/>
<rect x="1433.1" y="943.9" width="3.3" height="1.6" fill="#5aa8e8"/>
<rect x="1417.0" y="944.6" width="4.0" height="1.6" fill="#5aa8e8"/>
<rect x="1028.7" y="945.2" width="2.3" height="1.6" fill="#5aa8e8"/>
<rect x="1568.1" y="945.7" width="2.2" height="1.6" fill="#5aa8e8"/>
<rect x="1422.4" y="944.6" width="2.7" height="1.6" fill="#5aa8e8"/>
<rect x="1056.7" y="944.8" width="3.7" height="1.6" fill="#5aa8e8"/>
<rect x="1510.2" y="944.0" width="3.5" height="1.6" fill="#5aa8e8"/>
<rect x="1287.9" y="943.6" width="3.0" height="1.6" fill="#5aa8e8"/>
<rect x="1324.8" y="944.6" width="4.0" height="1.6" fill="#5aa8e8"/>
<rect x="1424.5" y="945.7" width="2.4" height="1.6" fill="#5aa8e8"/>
<rect x="1597.7" y="943.4" width="2.3" height="1.6" fill="#5aa8e8"/>
<rect x="1536.4" y="945.0" width="3.6" height="1.6" fill="#5aa8e8"/>
<rect x="1251.5" y="943.9" width="2.4" height="1.6" fill="#5aa8e8"/>
<rect x="1395.1" y="943.3" width="2.4" height="1.6" fill="#5aa8e8"/>
<rect x="1504.7" y="943.6" width="2.3" height="1.6" fill="#5aa8e8"/>
<rect x="1701.6" y="945.6" width="2.1" height="1.6" fill="#5aa8e8"/>
<rect x="1066.6" y="943.5" width="1.7" height="1.6" fill="#5aa8e8"/>
<rect x="1629.8" y="945.1" width="2.2" height="1.6" fill="#5aa8e8"/>
<rect x="1351.0" y="945.0" width="1.6" height="1.6" fill="#5aa8e8"/>
<rect x="1652.5" y="945.4" width="2.0" height="1.6" fill="#5aa8e8"/>
<rect x="1546.9" y="945.0" width="2.3" height="1.6" fill="#5aa8e8"/>
<rect x="1706.9" y="943.8" width="2.7" height="1.6" fill="#5aa8e8"/>
<rect x="1190.7" y="944.3" width="3.5" height="1.6" fill="#5aa8e8"/>
<rect x="1425.0" y="944.8" width="4.0" height="1.6" fill="#5aa8e8"/>
<rect x="1108.2" y="943.8" width="3.0" height="1.6" fill="#5aa8e8"/>
<rect x="1041.3" y="945.7" width="2.4" height="1.6" fill="#5aa8e8"/>
<rect x="1306.2" y="944.3" width="3.6" height="1.6" fill="#5aa8e8"/>
<rect x="1740.6" y="945.0" width="1.9" height="1.6" fill="#5aa8e8"/>
<rect x="1228.6" y="945.0" width="2.0" height="1.6" fill="#5aa8e8"/>
<rect x="1710.8" y="945.5" width="2.1" height="1.6" fill="#5aa8e8"/>
<rect x="1236.9" y="943.8" width="3.3" height="1.6" fill="#5aa8e8"/>
<rect x="947.1" y="945.0" width="1.7" height="1.6" fill="#5aa8e8"/>
<rect x="1672.8" y="944.6" width="3.0" height="1.6" fill="#5aa8e8"/>
<rect x="991.0" y="943.3" width="2.4" height="1.6" fill="#5aa8e8"/>
<rect x="1804.0" y="944.8" width="3.7" height="1.6" fill="#5aa8e8"/>
<rect x="961.3" y="943.5" width="1.6" height="1.6" fill="#5aa8e8"/>
<rect x="1541.0" y="943.7" width="2.2" height="1.6" fill="#5aa8e8"/>
<rect x="1513.7" y="945.0" width="2.3" height="1.6" fill="#5aa8e8"/>
<rect x="1331.3" y="944.0" width="2.9" height="1.6" fill="#5aa8e8"/>
<rect x="1229.3" y="944.1" width="2.1" height="1.6" fill="#5aa8e8"/>
<rect x="1171.0" y="943.9" width="1.5" height="1.6" fill="#5aa8e8"/>
<rect x="1187.7" y="944.7" width="2.2" height="1.6" fill="#5aa8e8"/>
<rect x="1007.3" y="945.4" width="2.7" height="1.6" fill="#5aa8e8"/>
<rect x="1371.8" y="944.0" width="3.7" height="1.6" fill="#5aa8e8"/>
<rect x="1593.2" y="944.8" width="3.1" height="1.6" fill="#5aa8e8"/>
<rect x="1536.8" y="944.5" width="2.5" height="1.6" fill="#5aa8e8"/>
<rect x="1260.5" y="944.5" width="2.7" height="1.6" fill="#5aa8e8"/>
<rect x="1387.4" y="944.6" width="3.5" height="1.6" fill="#5aa8e8"/>
<rect x="1719.8" y="943.8" width="1.6" height="1.6" fill="#5aa8e8"/>
<rect x="1179.1" y="943.3" width="3.5" height="1.6" fill="#5aa8e8"/>
<rect x="1471.0" y="943.9" width="2.0" height="1.6" fill="#5aa8e8"/>
<rect x="1697.9" y="945.4" width="3.2" height="1.6" fill="#5aa8e8"/>
<rect x="1536.2" y="945.1" width="2.6" height="1.6" fill="#5aa8e8"/>
<rect x="1267.2" y="944.6" width="3.7" height="1.6" fill="#5aa8e8"/>
<rect x="1810.1" y="945.6" width="3.6" height="1.6" fill="#5aa8e8"/>
<rect x="972.0" y="943.8" width="3.9" height="1.6" fill="#5aa8e8"/>
<rect x="1400.8" y="944.5" width="2.3" height="1.6" fill="#5aa8e8"/>
<rect x="1691.8" y="944.5" width="4.0" height="1.6" fill="#5aa8e8"/>
<rect x="973.1" y="945.8" width="1.5" height="1.6" fill="#5aa8e8"/>
<rect x="1039.5" y="944.2" width="3.1" height="1.6" fill="#5aa8e8"/>
<rect x="1005.1" y="944.7" width="3.8" height="1.6" fill="#5aa8e8"/>
<rect x="220.30" y="1054.10" width="1630.50" height="59.60" fill="none" stroke="#adb1b8" stroke-width="1.8" />
<g><text transform="translate(308.10,1092.70) scale(0.8670,1)" font-size="25.36" font-weight="normal" fill="#464646" >A01</text></g>
<rect x="370.60" y="1064.40" width="54.00" height="38.40" fill="#f8f8f8" />
<line x1="424.60" y1="1064.40" x2="424.60" y2="1102.80" stroke="#d6d6d6" stroke-width="1.2" />
<line x1="370.60" y1="1102.20" x2="424.60" y2="1102.20" stroke="#d6d6d6" stroke-width="1.2" />
<line x1="371.40" y1="1064.40" x2="371.40" y2="1102.80" stroke="#555555" stroke-width="1.6" />
<line x1="370.60" y1="1065.20" x2="424.60" y2="1065.20" stroke="#555555" stroke-width="1.6" />
<polyline points="374.4,1093.8 393.8,1070.0 412.5,1093.8 420.6,1083.8" fill="none" stroke="#2a2a2a" stroke-width="1.4"/>
<g><text transform="translate(510.60,1092.70) scale(0.8980,1)" font-size="25.36" font-weight="normal" fill="#464646" >A02</text></g>
<rect x="572.70" y="1064.40" width="54.00" height="38.40" fill="#f8f8f8" />
<line x1="626.70" y1="1064.40" x2="626.70" y2="1102.80" stroke="#d6d6d6" stroke-width="1.2" />
<line x1="572.70" y1="1102.20" x2="626.70" y2="1102.20" stroke="#d6d6d6" stroke-width="1.2" />
<line x1="573.50" y1="1064.40" x2="573.50" y2="1102.80" stroke="#555555" stroke-width="1.6" />
<line x1="572.70" y1="1065.20" x2="626.70" y2="1065.20" stroke="#555555" stroke-width="1.6" />
<polyline points="576.5,1093.8 595.9,1070.0 614.6,1093.8 622.7,1083.8" fill="none" stroke="#3c9e3c" stroke-width="1.4"/>
<g><text transform="translate(713.20,1092.70) scale(0.8928,1)" font-size="25.36" font-weight="normal" fill="#464646" >A03</text></g>
<rect x="775.00" y="1064.40" width="54.00" height="38.40" fill="#f8f8f8" />
<line x1="829.00" y1="1064.40" x2="829.00" y2="1102.80" stroke="#d6d6d6" stroke-width="1.2" />
<line x1="775.00" y1="1102.20" x2="829.00" y2="1102.20" stroke="#d6d6d6" stroke-width="1.2" />
<line x1="775.80" y1="1064.40" x2="775.80" y2="1102.80" stroke="#555555" stroke-width="1.6" />
<line x1="775.00" y1="1065.20" x2="829.00" y2="1065.20" stroke="#555555" stroke-width="1.6" />
<polyline points="778.8,1093.8 798.2,1070.0 816.9,1093.8 825.0,1083.8" fill="none" stroke="#3a70dc" stroke-width="1.4"/>
<g><text transform="translate(914.40,1092.70) scale(0.9192,1)" font-size="25.36" font-weight="normal" fill="#464646" >A04</text></g>
<rect x="977.00" y="1064.40" width="54.00" height="38.40" fill="#f8f8f8" />
<line x1="1031.00" y1="1064.40" x2="1031.00" y2="1102.80" stroke="#d6d6d6" stroke-width="1.2" />
<line x1="977.00" y1="1102.20" x2="1031.00" y2="1102.20" stroke="#d6d6d6" stroke-width="1.2" />
<line x1="977.80" y1="1064.40" x2="977.80" y2="1102.80" stroke="#555555" stroke-width="1.6" />
<line x1="977.00" y1="1065.20" x2="1031.00" y2="1065.20" stroke="#555555" stroke-width="1.6" />
<polyline points="980.8,1093.8 1000.2,1070.0 1018.9,1093.8 1027.0,1083.8" fill="none" stroke="#5cb6f2" stroke-width="1.4"/>
<g><text transform="translate(1042.72,1092.70) scale(0.9892,1)" font-size="25.36" font-weight="normal" fill="#464646" >target A01</text></g>
<rect x="1179.30" y="1064.40" width="54.00" height="38.40" fill="#f8f8f8" />
<line x1="1233.30" y1="1064.40" x2="1233.30" y2="1102.80" stroke="#d6d6d6" stroke-width="1.2" />
<line x1="1179.30" y1="1102.20" x2="1233.30" y2="1102.20" stroke="#d6d6d6" stroke-width="1.2" />
<line x1="1180.10" y1="1064.40" x2="1180.10" y2="1102.80" stroke="#555555" stroke-width="1.6" />
<line x1="1179.30" y1="1065.20" x2="1233.30" y2="1065.20" stroke="#555555" stroke-width="1.6" />
<polyline points="1183.0,1094.4 1194.7,1071.0 1213.7,1092.9 1229.7,1069.6" fill="none" stroke="#c6ee5c" stroke-width="1.4"/>
<g><text transform="translate(1244.82,1092.70) scale(1.0017,1)" font-size="25.36" font-weight="normal" fill="#464646" >target A02</text></g>
<rect x="1381.90" y="1064.40" width="54.00" height="38.40" fill="#f8f8f8" />
<line x1="1435.90" y1="1064.40" x2="1435.90" y2="1102.80" stroke="#d6d6d6" stroke-width="1.2" />
<line x1="1381.90" y1="1102.20" x2="1435.90" y2="1102.20" stroke="#d6d6d6" stroke-width="1.2" />
<line x1="1382.70" y1="1064.40" x2="1382.70" y2="1102.80" stroke="#555555" stroke-width="1.6" />
<line x1="1381.90" y1="1065.20" x2="1435.90" y2="1065.20" stroke="#555555" stroke-width="1.6" />
<polyline points="1385.6,1094.4 1397.3,1071.0 1416.3,1092.9 1432.3,1069.6" fill="none" stroke="#d966f2" stroke-width="1.4"/>
<g><text transform="translate(1447.12,1092.70) scale(0.9951,1)" font-size="25.36" font-weight="normal" fill="#464646" >target A03</text></g>
<rect x="1584.00" y="1064.40" width="54.00" height="38.40" fill="#f8f8f8" />
<line x1="1638.00" y1="1064.40" x2="1638.00" y2="1102.80" stroke="#d6d6d6" stroke-width="1.2" />
<line x1="1584.00" y1="1102.20" x2="1638.00" y2="1102.20" stroke="#d6d6d6" stroke-width="1.2" />
<line x1="1584.80" y1="1064.40" x2="1584.80" y2="1102.80" stroke="#555555" stroke-width="1.6" />
<line x1="1584.00" y1="1065.20" x2="1638.00" y2="1065.20" stroke="#555555" stroke-width="1.6" />
<polyline points="1587.7,1094.4 1599.4,1071.0 1618.4,1092.9 1634.4,1069.6" fill="none" stroke="#f0b040" stroke-width="1.4"/>
<g><text transform="translate(1649.62,1092.70) scale(0.9999,1)" font-size="25.36" font-weight="normal" fill="#464646" >target A04</text></g>
<rect x="1786.40" y="1064.40" width="54.00" height="38.40" fill="#f8f8f8" />
<line x1="1840.40" y1="1064.40" x2="1840.40" y2="1102.80" stroke="#d6d6d6" stroke-width="1.2" />
<line x1="1786.40" y1="1102.20" x2="1840.40" y2="1102.20" stroke="#d6d6d6" stroke-width="1.2" />
<line x1="1787.20" y1="1064.40" x2="1787.20" y2="1102.80" stroke="#555555" stroke-width="1.6" />
<line x1="1786.40" y1="1065.20" x2="1840.40" y2="1065.20" stroke="#555555" stroke-width="1.6" />
<polyline points="1790.1,1094.4 1801.8,1071.0 1820.8,1092.9 1836.8,1069.6" fill="none" stroke="#4a70ea" stroke-width="1.4"/>
<rect x="2.50" y="1177.00" width="1915.00" height="5.00" fill="#e8e8e8" />
<rect x="2.50" y="1177.00" width="12.50" height="137.00" fill="#e4e4e4" />
<rect x="15.00" y="1182.00" width="1890.00" height="132.00" fill="#fdfdfd" />
<line x1="15.00" y1="1182.80" x2="1905.00" y2="1182.80" stroke="#a9adb5" stroke-width="1.8" />
<line x1="15.90" y1="1182.00" x2="15.90" y2="1314.00" stroke="#a9adb5" stroke-width="1.8" />
<rect x="1904.50" y="1182.00" width="2.00" height="132.00" fill="#c8c8c8" />
<rect x="1906.50" y="1182.00" width="11.00" height="132.00" fill="#e6e6e6" />
<rect x="38.50" y="1191.80" width="41.50" height="125.40" fill="#efefef" stroke="#929292" stroke-width="1.6" rx="3" />
<rect x="91.50" y="1189.80" width="60.00" height="33.50" fill="#efefef" stroke="#929292" stroke-width="1.6" rx="5" />
<rect x="91.50" y="1231.50" width="60.00" height="33.50" fill="#339933" stroke="#2b6e2b" stroke-width="1.6" rx="5" />
<rect x="91.50" y="1275.20" width="60.00" height="33.50" fill="#339933" stroke="#2b6e2b" stroke-width="1.6" rx="5" />
<rect x="320.40" y="1190.20" width="60.05" height="33.20" fill="#efefef" stroke="#929292" stroke-width="1.6" rx="5" />
<rect x="320.40" y="1232.50" width="60.05" height="32.10" fill="#efefef" stroke="#929292" stroke-width="1.6" rx="5" />
<rect x="320.40" y="1275.60" width="60.05" height="32.35" fill="#339933" stroke="#2b6e2b" stroke-width="1.6" rx="5" />
<rect x="729.05" y="1274.70" width="64.85" height="27.50" fill="#efefef" stroke="#929292" stroke-width="1.6" rx="5" />
<rect x="1002.50" y="1274.70" width="66.10" height="27.50" fill="#339933" stroke="#2b6e2b" stroke-width="1.6" rx="5" />
<g><text transform="translate(156.58,1217.50) scale(0.8860,1)" font-size="24.20" font-weight="normal" fill="#1e1e1e" >Rezept senden</text></g>
<g><text transform="translate(157.35,1252.50) scale(0.9195,1)" font-size="22.90" font-weight="normal" fill="#1e1e1e" >Senden OK</text></g>
<g><text transform="translate(156.52,1300.80) scale(0.9847,1)" font-size="22.61" font-weight="normal" fill="#1e1e1e" >Empfang OK</text></g>
<g><text transform="translate(385.89,1217.00) scale(0.8607,1)" font-size="23.48" font-weight="normal" fill="#1e1e1e" >CRIO</text></g>
<g><text transform="translate(385.11,1261.90) scale(0.9853,1)" font-size="22.68" font-weight="normal" fill="#1e1e1e" >Klimaschrank</text></g>
<g><text transform="translate(385.10,1300.20) scale(0.9688,1)" font-size="23.19" font-weight="normal" fill="#1e1e1e" >NI box</text></g>
<g><text transform="translate(548.52,1213.50) scale(0.9815,1)" font-size="24.49" font-weight="normal" fill="#1e1e1e" >Temp. CC [° C]</text></g>
<rect x="547.35" y="1223.85" width="125.60" height="48.10" fill="#e6e6e6" stroke="#a8a8a8" stroke-width="1.5" />
<g><text transform="translate(632.55,1256.40) scale(1.0005,1)" font-size="23.71" font-weight="normal" fill="#1e1e1e" >0,0</text></g>
<g><text transform="translate(543.19,1299.50) scale(0.9904,1)" font-size="25.36" font-weight="normal" fill="#1e1e1e" >Handbedienung</text></g>
<g><text transform="translate(809.30,1296.60) scale(1.0115,1)" font-size="24.49" font-weight="normal" fill="#1e1e1e" >Automatikmodus</text></g>
<rect x="1218.05" y="1244.95" width="69.80" height="48.30" fill="#e6e6e6" stroke="#a8a8a8" stroke-width="1.5" />
<g><text transform="translate(1246.75,1277.60) scale(1.0873,1)" font-size="24.14" font-weight="normal" fill="#1e1e1e" >0</text></g>
<rect x="1303.55" y="1193.85" width="587.20" height="115.40" fill="#ffffff" stroke="#a3a3a3" stroke-width="1.5" />
<rect x="1304.00" y="1194.30" width="586.30" height="35.00" fill="#c6e2f7" />
<rect x="1304.00" y="1229.60" width="586.30" height="2.20" fill="#f2d700" />
<rect x="1304.00" y="1268.10" width="586.30" height="2.20" fill="#f2d700" />
<rect x="1304.00" y="1306.00" width="586.30" height="2.20" fill="#f2d700" />
<clipPath id="cpl"><rect x="1304" y="1190" width="585.5" height="125"/></clipPath>
<g><text transform="translate(1313.58,1257.90) scale(1.1339,1)" font-size="21.43" font-weight="normal" fill="#1e1e1e" >10:16:48 gegangen: SM1 - Kommunikation PC</text></g>
<g clip-path="url(#cpl)"><text transform="translate(1313.58,1220.30) scale(1.1339,1)" font-size="21.43" font-weight="normal" fill="#1e1e1e" >10:11:56 gekommen: SM3 - Kommunikation FPGA Regler</text></g>
<g clip-path="url(#cpl)"><text transform="translate(1313.58,1295.40) scale(1.1339,1)" font-size="21.43" font-weight="normal" fill="#1e1e1e" >10:16:48 gegangen: SM3 - Kommunikation FPGA Regler</text></g>
<path d="M1881,1137 L1888,1130 L1920,1130 L1920,1226 L1887,1207 L1881,1201 Z" fill="#575757"/>
<rect x="1887.60" y="1141.80" width="32.40" height="37.30" fill="#173a5c" />
<circle cx="1905.2" cy="1160.2" r="14.9" fill="#5a5a5a"/>
<path d="M1893.6,1160.3 L1898.8,1156.6 L1902.8,1158.7 L1908,1158.7 L1912,1156.6 L1917.2,1160.3 L1912,1164.1 L1908,1162 L1902.8,1162 L1898.8,1164.1 Z" fill="#173a5c"/>
<path d="M1,258.7 L14.4,273 L6.6,274.8 L10.2,284.8 L6.6,287.2 L3,279 L1,277.5" fill="#ffffff" stroke="#333333" stroke-width="1.8" stroke-linejoin="round"/>
</svg>
</body></html>
